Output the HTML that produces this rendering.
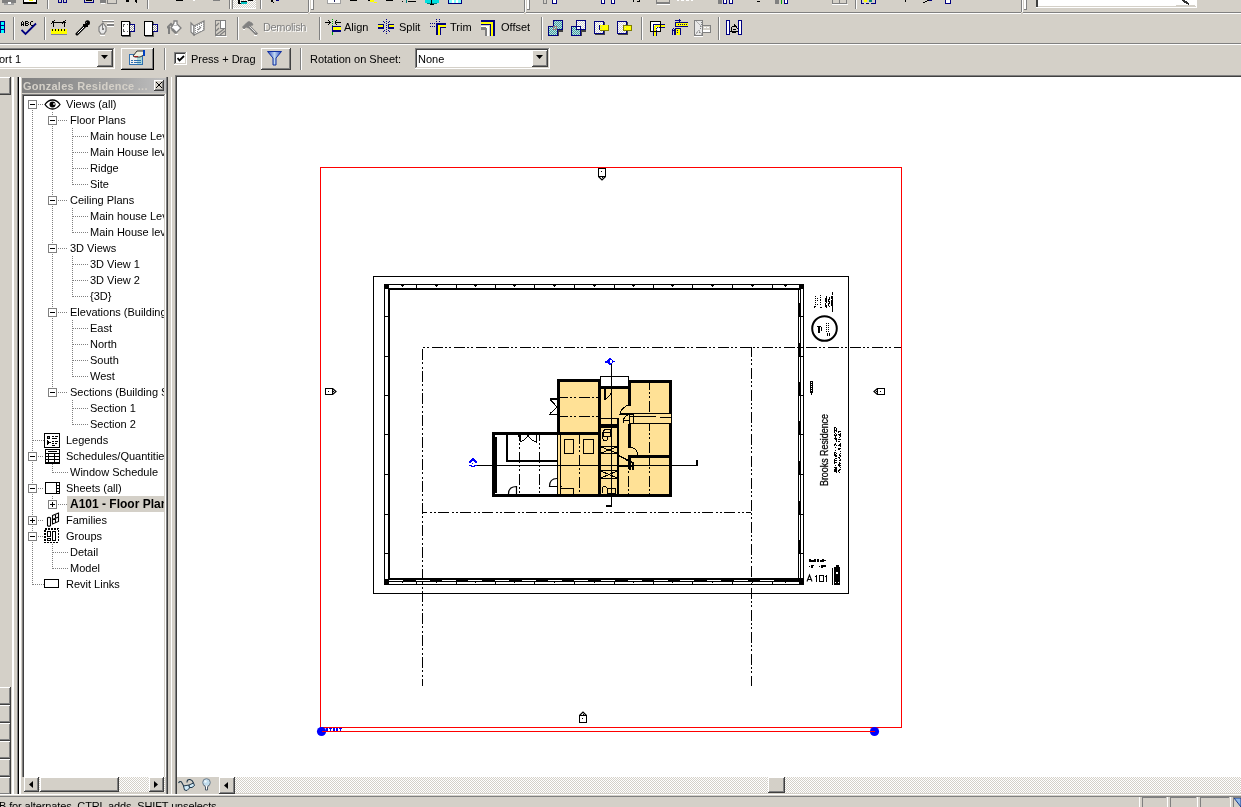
<!DOCTYPE html>
<html><head><meta charset="utf-8">
<style>
*{box-sizing:border-box}
html,body{margin:0;padding:0}
body{width:1241px;height:807px;overflow:hidden;background:#d4d0c8;position:relative;font-family:"Liberation Sans",sans-serif;font-size:11px;color:#000}
.a{position:absolute;display:block}
.t{position:absolute;white-space:nowrap;line-height:13px;font-size:11px;will-change:transform}
</style></head><body>
<div class="a" style="left:0px;top:12px;width:1241px;height:1px;background:#808080;"></div>
<div class="a" style="left:0px;top:13px;width:1241px;height:1px;background:#fff;"></div>
<div class="a" style="left:308px;top:11px;width:2px;height:3px;background:#d4d0c8;"></div>
<div class="a" style="left:308px;top:0px;width:1px;height:12px;background:#808080;"></div>
<div class="a" style="left:309px;top:0px;width:1px;height:12px;background:#fff;"></div>
<div class="a" style="left:524px;top:11px;width:2px;height:3px;background:#d4d0c8;"></div>
<div class="a" style="left:524px;top:0px;width:1px;height:12px;background:#808080;"></div>
<div class="a" style="left:525px;top:0px;width:1px;height:12px;background:#fff;"></div>
<div class="a" style="left:1021px;top:11px;width:2px;height:3px;background:#d4d0c8;"></div>
<div class="a" style="left:1021px;top:0px;width:1px;height:12px;background:#808080;"></div>
<div class="a" style="left:1022px;top:0px;width:1px;height:12px;background:#fff;"></div>
<div class="a" style="left:311px;top:0px;width:2px;height:9px;background:#fff;"></div><div class="a" style="left:313px;top:0px;width:1px;height:9px;background:#808080;"></div><div class="a" style="left:311px;top:9px;width:3px;height:1px;background:#808080;"></div>
<div class="a" style="left:527px;top:0px;width:2px;height:9px;background:#fff;"></div><div class="a" style="left:529px;top:0px;width:1px;height:9px;background:#808080;"></div><div class="a" style="left:527px;top:9px;width:3px;height:1px;background:#808080;"></div>
<div class="a" style="left:1024px;top:0px;width:2px;height:9px;background:#fff;"></div><div class="a" style="left:1026px;top:0px;width:1px;height:9px;background:#808080;"></div><div class="a" style="left:1024px;top:9px;width:3px;height:1px;background:#808080;"></div>
<div class="a" style="left:47px;top:0px;width:1px;height:9px;background:#808080;"></div><div class="a" style="left:48px;top:0px;width:1px;height:9px;background:#fff;"></div>
<div class="a" style="left:147px;top:0px;width:1px;height:9px;background:#808080;"></div><div class="a" style="left:148px;top:0px;width:1px;height:9px;background:#fff;"></div>
<div class="a" style="left:229px;top:0px;width:1px;height:9px;background:#808080;"></div><div class="a" style="left:230px;top:0px;width:1px;height:9px;background:#fff;"></div>
<div class="a" style="left:260px;top:0px;width:1px;height:9px;background:#808080;"></div><div class="a" style="left:261px;top:0px;width:1px;height:9px;background:#fff;"></div>
<div class="a" style="left:855px;top:0px;width:1px;height:9px;background:#808080;"></div><div class="a" style="left:856px;top:0px;width:1px;height:9px;background:#fff;"></div>
<div class="a" style="left:232px;top:0px;width:24px;height:9px;background:repeating-conic-gradient(#d4d0c8 0 25%,#fff 0 50%) 0 0/2px 2px;"></div><div class="a" style="left:232px;top:8px;width:24px;height:1px;background:#fff;"></div><div class="a" style="left:232px;top:0px;width:1px;height:9px;background:#808080;"></div>
<svg class="a" style="left:0px;top:0px" width="18" height="6" viewBox="0 0 18 6" shape-rendering="crispEdges" ><rect x="2" y="0" width="14" height="3" fill="#808080"/><rect x="4" y="3" width="10" height="2" fill="#a0a0a0"/><rect x="8" y="2" width="3" height="2" fill="#fff"/></svg>
<svg class="a" style="left:22px;top:0px" width="18" height="5" viewBox="0 0 18 5" shape-rendering="crispEdges" ><rect x="1" y="0" width="14" height="4" fill="#000"/><rect x="2" y="0" width="12" height="2" fill="#fff"/><rect x="7" y="0" width="4" height="1" fill="#ffff00"/><rect x="3" y="1" width="2" height="1" fill="#fff"/></svg>
<svg class="a" style="left:57px;top:0px" width="12" height="4" viewBox="0 0 12 4" shape-rendering="crispEdges" ><rect x="1.5" y="-1.5" width="3" height="4" fill="none" stroke="#000080" stroke-width="1"/><rect x="6.5" y="-1.5" width="3" height="4" fill="none" stroke="#000080" stroke-width="1"/></svg>
<svg class="a" style="left:83px;top:0px" width="12" height="4" viewBox="0 0 12 4" shape-rendering="crispEdges" ><rect x="1.5" y="-1.5" width="9" height="4" fill="none" stroke="#000080" stroke-width="1"/><rect x="3" y="0" width="6" height="1" fill="#000"/></svg>
<svg class="a" style="left:100px;top:0px" width="18" height="5" viewBox="0 0 18 5" shape-rendering="crispEdges" ><rect x="0" y="0" width="6" height="3" fill="#808080"/><rect x="7.5" y="-1.5" width="9" height="5" fill="#d4d0c8" stroke="#808080" stroke-width="1"/><rect x="1" y="3" width="4" height="1" fill="#fff"/></svg>
<svg class="a" style="left:125px;top:0px" width="14" height="4" viewBox="0 0 14 4" shape-rendering="crispEdges" ><rect x="1" y="0" width="3" height="2" fill="#000"/><rect x="10" y="0" width="2" height="2" fill="#000"/><rect x="11" y="2" width="1" height="1" fill="#000"/></svg>
<svg class="a" style="left:175px;top:0px" width="30" height="3" viewBox="0 0 30 3" shape-rendering="crispEdges" ><rect x="1" y="0" width="7" height="1" fill="#000"/><rect x="18" y="0" width="2" height="1" fill="#fff"/></svg>
<svg class="a" style="left:212px;top:0px" width="10" height="2" viewBox="0 0 10 2" shape-rendering="crispEdges" ><rect x="1" y="0" width="7" height="1" fill="#808080"/></svg>
<svg class="a" style="left:236px;top:0px" width="18" height="5" viewBox="0 0 18 5" shape-rendering="crispEdges" ><rect x="2" y="0" width="2" height="4" fill="#000"/><rect x="2" y="3" width="3" height="1" fill="#000"/><rect x="5" y="2" width="6" height="2" fill="#00c0c0"/><rect x="5" y="1" width="6" height="1" fill="#000"/><rect x="12" y="0" width="5" height="1" fill="#000"/></svg>
<svg class="a" style="left:270px;top:0px" width="12" height="4" viewBox="0 0 12 4" shape-rendering="crispEdges" ><rect x="1" y="0" width="2" height="2" fill="#000"/><rect x="3" y="2" width="1" height="1" fill="#000"/><rect x="6" y="0" width="3" height="1" fill="#000080"/></svg>
<svg class="a" style="left:326px;top:0px" width="16" height="5" viewBox="0 0 16 5" shape-rendering="crispEdges" ><rect x="1" y="0" width="14" height="4" fill="#a0a0a0"/><rect x="2" y="0" width="12" height="3" fill="#fff"/><rect x="8" y="0" width="1" height="2" fill="#202060"/></svg>
<svg class="a" style="left:349px;top:0px" width="48" height="4" viewBox="0 0 48 4" shape-rendering="crispEdges" ><rect x="1" y="0" width="7" height="1" fill="#000"/><rect x="19" y="0" width="3" height="1" fill="#000"/><rect x="21" y="0" width="4" height="2" fill="#ffff00"/><rect x="25" y="2" width="3" height="1" fill="#ffff00"/><rect x="37" y="0" width="7" height="1" fill="#000"/></svg>
<svg class="a" style="left:401px;top:0px" width="16" height="3" viewBox="0 0 16 3" shape-rendering="crispEdges" ><rect x="1" y="1" width="1" height="1" fill="#000"/><rect x="5" y="0" width="1" height="3" fill="#008080"/><rect x="7" y="1" width="8" height="1" fill="#000"/></svg>
<svg class="a" style="left:424px;top:0px" width="16" height="5" viewBox="0 0 16 5" shape-rendering="crispEdges" ><rect x="1" y="0" width="14" height="3" fill="#00e0e0"/><rect x="3" y="3" width="10" height="1" fill="#008080"/><rect x="6" y="4" width="4" height="1" fill="#000"/><rect x="7" y="0" width="1" height="4" fill="#000"/></svg>
<svg class="a" style="left:447px;top:0px" width="16" height="5" viewBox="0 0 16 5" shape-rendering="crispEdges" ><rect x="1" y="0" width="14" height="4" fill="#000080"/><rect x="2" y="0" width="12" height="3" fill="#80ffff"/><rect x="5" y="0" width="2" height="3" fill="#fff"/><rect x="9" y="0" width="2" height="3" fill="#fff"/></svg>
<svg class="a" style="left:542px;top:0px" width="20" height="5" viewBox="0 0 20 5" shape-rendering="crispEdges" ><rect x="1" y="0" width="4" height="4" fill="#808080"/><rect x="2" y="0" width="2" height="3" fill="#d4d0c8"/><rect x="10" y="0" width="5" height="4" fill="#000080"/><rect x="11" y="0" width="3" height="3" fill="#fff"/></svg>
<svg class="a" style="left:600px;top:0px" width="18" height="5" viewBox="0 0 18 5" shape-rendering="crispEdges" ><rect x="1" y="0" width="4" height="4" fill="#000080"/><rect x="2" y="0" width="2" height="3" fill="#fff"/><rect x="11" y="0" width="4" height="4" fill="#000080"/><rect x="12" y="0" width="2" height="3" fill="#fff"/></svg>
<svg class="a" style="left:632px;top:0px" width="12" height="3" viewBox="0 0 12 3" shape-rendering="crispEdges" ><rect x="1" y="0" width="1" height="2" fill="#000"/><rect x="5" y="1" width="3" height="1" fill="#000"/><rect x="7" y="0" width="1" height="1" fill="#000"/></svg>
<svg class="a" style="left:655px;top:0px" width="16" height="6" viewBox="0 0 16 6" shape-rendering="crispEdges" ><rect x="1" y="0" width="14" height="4" fill="#808080"/><rect x="2" y="0" width="12" height="2" fill="#d4d0c8"/><rect x="2" y="4" width="13" height="1" fill="#fff"/></svg>
<svg class="a" style="left:676px;top:0px" width="26" height="2" viewBox="0 0 26 2" shape-rendering="crispEdges" ><rect x="1" y="0" width="2" height="1" fill="#fff"/><rect x="5" y="0" width="3" height="1" fill="#fff"/><rect x="10" y="0" width="3" height="1" fill="#fff"/><rect x="15" y="0" width="2" height="1" fill="#fff"/></svg>
<svg class="a" style="left:717px;top:0px" width="18" height="5" viewBox="0 0 18 5" shape-rendering="crispEdges" ><rect x="1" y="0" width="4" height="4" fill="#808080"/><rect x="6" y="0" width="4" height="4" fill="#000080"/><rect x="7" y="0" width="2" height="3" fill="#fff"/><rect x="12" y="0" width="4" height="4" fill="#000080"/><rect x="13" y="0" width="2" height="3" fill="#fff"/></svg>
<svg class="a" style="left:756px;top:0px" width="6" height="3" viewBox="0 0 6 3" shape-rendering="crispEdges" ><rect x="1" y="1" width="3" height="1" fill="#000"/></svg>
<svg class="a" style="left:774px;top:0px" width="16" height="5" viewBox="0 0 16 5" shape-rendering="crispEdges" ><rect x="1" y="0" width="4" height="4" fill="#808080"/><rect x="7" y="0" width="1" height="4" fill="#00a000"/><rect x="10" y="0" width="4" height="4" fill="#000080"/><rect x="11" y="0" width="2" height="3" fill="#fff"/></svg>
<svg class="a" style="left:831px;top:0px" width="18" height="5" viewBox="0 0 18 5" shape-rendering="crispEdges" ><rect x="1.5" y="-1.5" width="14" height="5" fill="none" stroke="#808080" stroke-width="1"/><rect x="8" y="0" width="1" height="4" fill="#808080"/><rect x="1" y="4" width="16" height="1" fill="#fff"/></svg>
<svg class="a" style="left:860px;top:0px" width="18" height="5" viewBox="0 0 18 5" shape-rendering="crispEdges" ><rect x="1" y="0" width="15" height="4" fill="#000080"/><rect x="2" y="0" width="13" height="3" fill="#d4d0c8"/><rect x="4" y="0" width="3" height="2" fill="#ffff00"/><rect x="9" y="0" width="3" height="2" fill="#008080"/><rect x="4" y="3" width="2" height="1" fill="#d4d0c8"/><rect x="9" y="3" width="2" height="1" fill="#d4d0c8"/></svg>
<svg class="a" style="left:903px;top:0px" width="6" height="3" viewBox="0 0 6 3" shape-rendering="crispEdges" ><rect x="2" y="0" width="1" height="2" fill="#000"/></svg>
<svg class="a" style="left:922px;top:0px" width="12" height="4" viewBox="0 0 12 4" shape-rendering="crispEdges" ><rect x="1" y="2" width="2" height="1" fill="#000"/><rect x="3" y="1" width="2" height="1" fill="#000"/><rect x="5" y="0" width="2" height="1" fill="#000"/><rect x="7" y="0" width="3" height="1" fill="#000080"/></svg>
<svg class="a" style="left:944px;top:0px" width="8" height="5" viewBox="0 0 8 5" shape-rendering="crispEdges" ><rect x="1" y="0" width="6" height="4" fill="#000080"/><rect x="2" y="0" width="4" height="3" fill="#fff"/></svg>
<div class="a" style="left:1036px;top:0px;width:161px;height:8px;background:#fff;"></div><div class="a" style="left:1036px;top:0px;width:2px;height:7px;background:#404040;"></div><div class="a" style="left:1038px;top:6px;width:159px;height:1px;background:#d4d0c8;"></div><div class="a" style="left:1037px;top:7px;width:160px;height:1px;background:#fff;"></div><div class="a" style="left:1196px;top:0px;width:1px;height:8px;background:#fff;"></div>
<div class="a" style="left:1176px;top:5px;width:19px;height:2px;background:#d4d0c8;"></div>
<svg class="a" style="left:1180px;top:0px" width="14" height="6" viewBox="0 0 14 6" shape-rendering="crispEdges" ><path d="M2 0 L9 4" stroke="#303030" stroke-width="2"/></svg>
<div class="a" style="left:0px;top:43px;width:1241px;height:1px;background:#808080;"></div>
<div class="a" style="left:0px;top:44px;width:1241px;height:1px;background:#fff;"></div>
<div class="a" style="left:13px;top:17px;width:1px;height:23px;background:#808080;"></div><div class="a" style="left:14px;top:17px;width:1px;height:23px;background:#fff;"></div>
<div class="a" style="left:44px;top:17px;width:1px;height:23px;background:#808080;"></div><div class="a" style="left:45px;top:17px;width:1px;height:23px;background:#fff;"></div>
<div class="a" style="left:237px;top:17px;width:1px;height:23px;background:#808080;"></div><div class="a" style="left:238px;top:17px;width:1px;height:23px;background:#fff;"></div>
<div class="a" style="left:319px;top:17px;width:1px;height:23px;background:#808080;"></div><div class="a" style="left:320px;top:17px;width:1px;height:23px;background:#fff;"></div>
<div class="a" style="left:541px;top:17px;width:1px;height:23px;background:#808080;"></div><div class="a" style="left:542px;top:17px;width:1px;height:23px;background:#fff;"></div>
<div class="a" style="left:641px;top:17px;width:1px;height:23px;background:#808080;"></div><div class="a" style="left:642px;top:17px;width:1px;height:23px;background:#fff;"></div>
<div class="a" style="left:718px;top:17px;width:1px;height:23px;background:#808080;"></div><div class="a" style="left:719px;top:17px;width:1px;height:23px;background:#fff;"></div>
<svg class="a" style="left:0px;top:14px" width="6" height="20" viewBox="0 0 6 20" shape-rendering="crispEdges" ><rect x="0" y="7" width="5" height="12" fill="#000080"/><rect x="1" y="8" width="3" height="3" fill="#00ffff"/><rect x="1" y="12" width="3" height="3" fill="#00ffff"/><rect x="1" y="16" width="3" height="3" fill="#00ffff"/></svg>
<svg class="a" style="left:21px;top:20px" width="16" height="16" viewBox="0 0 16 16" shape-rendering="crispEdges" ><rect x="0" y="2" width="1" height="4" fill="#000"/><rect x="2" y="2" width="1" height="4" fill="#000"/><rect x="1" y="1" width="1" height="1" fill="#000"/><rect x="0" y="4" width="3" height="1" fill="#000"/><rect x="4" y="1" width="1" height="5" fill="#000"/><rect x="5" y="1" width="2" height="1" fill="#000"/><rect x="5" y="3" width="2" height="1" fill="#000"/><rect x="5" y="5" width="2" height="1" fill="#000"/><rect x="7" y="2" width="1" height="1" fill="#000"/><rect x="7" y="4" width="1" height="1" fill="#000"/><rect x="9" y="2" width="1" height="3" fill="#000"/><rect x="10" y="1" width="2" height="1" fill="#000"/><rect x="10" y="5" width="2" height="1" fill="#000"/><path d="M0.5 10 L4.5 14 L15 3.5" fill="none" stroke="#000080" stroke-width="1.8" shape-rendering="auto"/></svg>
<svg class="a" style="left:51px;top:20px" width="16" height="16" viewBox="0 0 16 16" shape-rendering="crispEdges" ><rect x="1" y="2" width="14" height="1" fill="#000"/><rect x="2" y="1" width="1" height="6" fill="#000"/><rect x="13" y="1" width="1" height="6" fill="#000"/><rect x="1" y="1" width="1" height="1" fill="#000"/><rect x="3" y="0" width="1" height="1" fill="#000"/><rect x="12" y="1" width="1" height="1" fill="#000"/><rect x="14" y="0" width="1" height="1" fill="#000"/><rect x="0" y="3" width="1" height="1" fill="#000"/><rect x="11" y="3" width="1" height="1" fill="#000"/><rect x="0" y="9" width="16" height="5" fill="#ffff00"/><rect x="0" y="14" width="16" height="1" fill="#8080a0"/><rect x="1" y="9" width="1" height="2" fill="#000"/><rect x="4" y="9" width="1" height="2" fill="#000"/><rect x="7" y="9" width="1" height="2" fill="#000"/><rect x="10" y="9" width="1" height="2" fill="#000"/><rect x="13" y="9" width="1" height="2" fill="#000"/></svg>
<svg class="a" style="left:75px;top:20px" width="16" height="16" viewBox="0 0 16 16" shape-rendering="crispEdges" ><path d="M2 14 L10 6" stroke="#000" stroke-width="3" stroke-linecap="round" shape-rendering="auto"/><path d="M2.5 13.5 L9.5 6.5" stroke="#fff" stroke-width="1" shape-rendering="auto"/><circle cx="12.5" cy="2.8" r="2.5" fill="#000" shape-rendering="auto"/><rect x="8" y="4" width="5" height="3" fill="#000"/><rect x="11" y="2" width="1" height="1" fill="#808080"/></svg>
<svg class="a" style="left:98px;top:20px" width="16" height="17" viewBox="0 0 16 17" shape-rendering="crispEdges" ><path d="M5 3 L8 7 L8 11 L6 14 L3 14 L1 11 L1 7 Z" fill="#e8e8e8" stroke="#808080" stroke-width="1.2" shape-rendering="auto"/><rect x="4" y="8" width="2" height="2" fill="#808080"/><rect x="4" y="3" width="1" height="5" fill="#808080"/><rect x="2" y="15" width="5" height="1" fill="#fff"/><rect x="5" y="0" width="11" height="1" fill="#fff"/><rect x="4" y="1" width="12" height="1" fill="#808080"/><rect x="9" y="3" width="7" height="1" fill="#fff"/><rect x="9" y="4" width="7" height="2" fill="#808080"/><rect x="9" y="6" width="7" height="1" fill="#fff"/></svg>
<svg class="a" style="left:121px;top:21px" width="16" height="17" viewBox="0 0 16 17" shape-rendering="crispEdges" ><rect x="1" y="1" width="9" height="15" fill="#606060"/><rect x="0" y="0" width="9" height="15" fill="#000"/><rect x="1" y="1" width="7" height="13" fill="#fff"/><rect x="9" y="3" width="5" height="8" fill="#000080"/><rect x="9" y="4" width="4" height="6" fill="#fff"/><rect x="9" y="4" width="1" height="1" fill="#a0a0a0"/><rect x="11" y="4" width="1" height="1" fill="#a0a0a0"/><rect x="10" y="5" width="1" height="1" fill="#a0a0a0"/><rect x="12" y="5" width="1" height="1" fill="#a0a0a0"/><rect x="9" y="6" width="1" height="1" fill="#a0a0a0"/><rect x="11" y="6" width="1" height="1" fill="#a0a0a0"/><rect x="10" y="7" width="1" height="1" fill="#a0a0a0"/><rect x="12" y="7" width="1" height="1" fill="#a0a0a0"/><rect x="9" y="8" width="1" height="1" fill="#a0a0a0"/><rect x="11" y="8" width="1" height="1" fill="#a0a0a0"/><rect x="10" y="9" width="1" height="1" fill="#a0a0a0"/><rect x="12" y="9" width="1" height="1" fill="#a0a0a0"/><rect x="2" y="3" width="1" height="3" fill="#606060"/><rect x="2" y="8" width="1" height="3" fill="#606060"/><rect x="3" y="3" width="1" height="1" fill="#606060"/><rect x="3" y="10" width="1" height="1" fill="#606060"/><rect x="6" y="3" width="1" height="1" fill="#606060"/><rect x="6" y="10" width="1" height="1" fill="#606060"/></svg>
<svg class="a" style="left:144px;top:21px" width="16" height="17" viewBox="0 0 16 17" shape-rendering="crispEdges" ><rect x="1" y="1" width="9" height="15" fill="#606060"/><rect x="0" y="0" width="9" height="15" fill="#000"/><rect x="1" y="1" width="7" height="13" fill="#fff"/><rect x="9" y="3" width="5" height="8" fill="#000080"/><rect x="9" y="4" width="4" height="6" fill="#fff"/><rect x="9" y="4" width="1" height="1" fill="#a0a0a0"/><rect x="11" y="4" width="1" height="1" fill="#a0a0a0"/><rect x="10" y="5" width="1" height="1" fill="#a0a0a0"/><rect x="12" y="5" width="1" height="1" fill="#a0a0a0"/><rect x="9" y="6" width="1" height="1" fill="#a0a0a0"/><rect x="11" y="6" width="1" height="1" fill="#a0a0a0"/><rect x="10" y="7" width="1" height="1" fill="#a0a0a0"/><rect x="12" y="7" width="1" height="1" fill="#a0a0a0"/><rect x="9" y="8" width="1" height="1" fill="#a0a0a0"/><rect x="11" y="8" width="1" height="1" fill="#a0a0a0"/><rect x="10" y="9" width="1" height="1" fill="#a0a0a0"/><rect x="12" y="9" width="1" height="1" fill="#a0a0a0"/></svg>
<svg class="a" style="left:167px;top:20px" width="16" height="16" viewBox="0 0 16 16" shape-rendering="crispEdges" ><path d="M7 3 L7 1 L10 1 L10 4 L14 8 L9 13 L4 8 Z" fill="#fff" stroke="#808080" stroke-width="1.3" shape-rendering="auto"/><path d="M5 9 L9 13" stroke="#808080" stroke-width="2.5" shape-rendering="auto"/><rect x="1" y="7" width="2" height="7" fill="#808080"/><path d="M0 8 L4 4 L6 6" fill="none" stroke="#808080" stroke-width="2" shape-rendering="auto"/><rect x="6" y="5" width="4" height="1" fill="#c0c0c0"/><rect x="8" y="14" width="3" height="1" fill="#fff"/></svg>
<svg class="a" style="left:190px;top:20px" width="16" height="16" viewBox="0 0 16 16" shape-rendering="crispEdges" ><path d="M1 3 L4 6 L4 15 L1 12 Z" fill="#fff" stroke="#808080" stroke-width="1.2" shape-rendering="auto"/><path d="M4 6 L14 1 L14 10 L4 15 Z" fill="#fff" stroke="#808080" stroke-width="1.2" shape-rendering="auto"/><rect x="5" y="6" width="1" height="1" fill="#909090"/><rect x="7" y="5" width="1" height="1" fill="#909090"/><rect x="9" y="4" width="1" height="1" fill="#909090"/><rect x="11" y="3" width="1" height="1" fill="#909090"/><rect x="13" y="2" width="1" height="1" fill="#909090"/><rect x="5" y="8" width="1" height="1" fill="#909090"/><rect x="7" y="7" width="1" height="1" fill="#909090"/><rect x="9" y="6" width="1" height="1" fill="#909090"/><rect x="11" y="5" width="1" height="1" fill="#909090"/><rect x="13" y="4" width="1" height="1" fill="#909090"/><rect x="5" y="10" width="1" height="1" fill="#909090"/><rect x="7" y="9" width="1" height="1" fill="#909090"/><rect x="9" y="8" width="1" height="1" fill="#909090"/><rect x="11" y="7" width="1" height="1" fill="#909090"/><rect x="13" y="6" width="1" height="1" fill="#909090"/><rect x="5" y="12" width="1" height="1" fill="#909090"/><rect x="7" y="11" width="1" height="1" fill="#909090"/><rect x="9" y="10" width="1" height="1" fill="#909090"/><rect x="11" y="9" width="1" height="1" fill="#909090"/><rect x="13" y="8" width="1" height="1" fill="#909090"/><rect x="5" y="14" width="1" height="1" fill="#909090"/><rect x="7" y="13" width="1" height="1" fill="#909090"/><rect x="9" y="12" width="1" height="1" fill="#909090"/><rect x="11" y="11" width="1" height="1" fill="#909090"/><rect x="13" y="10" width="1" height="1" fill="#909090"/><rect x="8" y="7" width="4" height="4" fill="#fff"/><path d="M8 10 L11 7" stroke="#808080" stroke-width="1.2" shape-rendering="auto"/></svg>
<svg class="a" style="left:215px;top:20px" width="12" height="17" viewBox="0 0 12 17" shape-rendering="crispEdges" ><rect x="0" y="0" width="11" height="16" fill="#808080"/><rect x="1" y="1" width="9" height="14" fill="#d4d0c8"/><rect x="5" y="1" width="1" height="8" fill="#808080"/><rect x="5" y="8" width="5" height="1" fill="#808080"/><rect x="6" y="1" width="4" height="7" fill="#fff"/><path d="M1 6 L4 3 M1 11 L4 8 M1 15 L9 9 M5 15 L10 11" stroke="#808080" stroke-width="1.3" shape-rendering="auto"/><rect x="1" y="16" width="11" height="1" fill="#fff"/></svg>
<svg class="a" style="left:242px;top:20px" width="16" height="16" viewBox="0 0 16 16" shape-rendering="crispEdges" ><path d="M0.5 7 L5 2.5 L7 1.5 L10 3 L11 5 L8.5 5.5 L6.5 8 L4 7 L2 9 Z" fill="#808080" stroke="#808080" stroke-width="0.8" shape-rendering="auto"/><path d="M7 6.5 L14 13.5" stroke="#808080" stroke-width="3" stroke-linecap="square" shape-rendering="auto"/><path d="M7.5 6.5 L13.5 12.5" stroke="#fff" stroke-width="0.8" shape-rendering="auto"/><rect x="1" y="9" width="2" height="1" fill="#fff"/><rect x="12" y="15" width="3" height="1" fill="#fff"/></svg>
<div class="t" style="left:263px;top:21px;color:#808080;text-shadow:1px 1px 0 #fff;letter-spacing:-0.35px">Demolish</div>
<svg class="a" style="left:325px;top:19px" width="16" height="16" viewBox="0 0 16 16" shape-rendering="crispEdges" ><rect x="0" y="3" width="6" height="1" fill="#000"/><rect x="4" y="2" width="1" height="3" fill="#000"/><rect x="10" y="2" width="1" height="3" fill="#000"/><rect x="10" y="3" width="6" height="1" fill="#000"/><rect x="3" y="1" width="1" height="1" fill="#000"/><rect x="3" y="5" width="1" height="1" fill="#000"/><rect x="11" y="1" width="1" height="1" fill="#000"/><rect x="11" y="5" width="1" height="1" fill="#000"/><rect x="7" y="0" width="1" height="1" fill="#00a000"/><rect x="7" y="2" width="1" height="1" fill="#00a000"/><rect x="7" y="4" width="1" height="1" fill="#00a000"/><rect x="7" y="6" width="1" height="1" fill="#00a000"/><rect x="7" y="8" width="1" height="1" fill="#00a000"/><rect x="7" y="10" width="1" height="1" fill="#00a000"/><rect x="7" y="12" width="1" height="1" fill="#00a000"/><rect x="7" y="14" width="1" height="1" fill="#00a000"/><rect x="7" y="7" width="9" height="6" fill="#000080"/><rect x="8" y="8" width="8" height="3" fill="#ffff00"/><rect x="7" y="13" width="1" height="3" fill="#00a000"/></svg>
<div class="t" style="left:344px;top:21px;">Align</div>
<svg class="a" style="left:378px;top:19px" width="16" height="16" viewBox="0 0 16 16" shape-rendering="crispEdges" ><rect x="0" y="5" width="6" height="5" fill="#000080"/><rect x="0" y="6" width="5" height="2" fill="#ffff00"/><rect x="10" y="5" width="6" height="5" fill="#000080"/><rect x="11" y="6" width="5" height="2" fill="#ffff00"/><rect x="8" y="0" width="1" height="1" fill="#000080"/><rect x="8" y="2" width="1" height="1" fill="#000080"/><rect x="8" y="4" width="1" height="1" fill="#000080"/><rect x="8" y="6" width="1" height="1" fill="#000080"/><rect x="8" y="8" width="1" height="1" fill="#000080"/><rect x="8" y="10" width="1" height="1" fill="#000080"/><rect x="8" y="12" width="1" height="1" fill="#000080"/><rect x="8" y="14" width="1" height="1" fill="#000080"/><rect x="5" y="2" width="1" height="1" fill="#000080"/><rect x="6" y="3" width="1" height="1" fill="#000080"/><rect x="10" y="3" width="1" height="1" fill="#000080"/><rect x="11" y="2" width="1" height="1" fill="#000080"/><rect x="5" y="12" width="1" height="1" fill="#000080"/><rect x="6" y="11" width="1" height="1" fill="#000080"/><rect x="10" y="11" width="1" height="1" fill="#000080"/><rect x="11" y="12" width="1" height="1" fill="#000080"/></svg>
<div class="t" style="left:399px;top:21px;">Split</div>
<svg class="a" style="left:430px;top:19px" width="16" height="16" viewBox="0 0 16 16" shape-rendering="crispEdges" ><rect x="0" y="4" width="1" height="1" fill="#000080"/><rect x="0" y="7" width="1" height="1" fill="#000080"/><rect x="2" y="4" width="1" height="1" fill="#000080"/><rect x="2" y="7" width="1" height="1" fill="#000080"/><rect x="4" y="4" width="1" height="1" fill="#000080"/><rect x="4" y="7" width="1" height="1" fill="#000080"/><rect x="6" y="0" width="1" height="1" fill="#000080"/><rect x="9" y="0" width="1" height="1" fill="#000080"/><rect x="6" y="2" width="1" height="1" fill="#000080"/><rect x="9" y="2" width="1" height="1" fill="#000080"/><rect x="6" y="4" width="10" height="2" fill="#000080"/><rect x="6" y="4" width="2" height="12" fill="#000080"/><rect x="8" y="6" width="8" height="2" fill="#ffff00"/><rect x="8" y="6" width="2" height="10" fill="#ffff00"/><rect x="10" y="8" width="6" height="1" fill="#000080"/><rect x="10" y="8" width="1" height="8" fill="#000080"/></svg>
<div class="t" style="left:450px;top:21px;">Trim</div>
<svg class="a" style="left:481px;top:20px" width="16" height="16" viewBox="0 0 16 16" shape-rendering="crispEdges" ><rect x="0" y="0" width="14" height="2" fill="#000080"/><rect x="12" y="0" width="2" height="16" fill="#000080"/><rect x="0" y="2" width="12" height="2" fill="#ffff00"/><rect x="10" y="2" width="2" height="14" fill="#ffff00"/><rect x="0" y="4" width="10" height="1" fill="#000080"/><rect x="9" y="4" width="1" height="12" fill="#000080"/><rect x="0" y="6" width="8" height="2" fill="#fff"/><rect x="6" y="6" width="2" height="10" fill="#fff"/><rect x="0" y="8" width="6" height="2" fill="#808080"/><rect x="4" y="8" width="2" height="8" fill="#808080"/><rect x="0" y="7" width="5" height="1" fill="#808080"/></svg>
<div class="t" style="left:501px;top:21px;">Offset</div>
<svg class="a" style="left:548px;top:20px" width="17" height="17" viewBox="0 0 17 17" shape-rendering="crispEdges" ><defs><pattern id="pt" width="2" height="2" patternUnits="userSpaceOnUse"><rect width="2" height="2" fill="#40a0a0"/><rect width="1" height="1" fill="#c0e0e0"/><rect x="1" y="1" width="1" height="1" fill="#c0e0e0"/></pattern><pattern id="pw" width="2" height="2" patternUnits="userSpaceOnUse"><rect width="2" height="2" fill="#fff"/><rect width="1" height="1" fill="#d0d0d0"/><rect x="1" y="1" width="1" height="1" fill="#d0d0d0"/></pattern><pattern id="py" width="2" height="2" patternUnits="userSpaceOnUse"><rect width="2" height="2" fill="#ffff00"/><rect width="1" height="1" fill="#e0e0a0"/></pattern></defs><rect x="1" y="9" width="10" height="7" fill="#404040"/><rect x="5" y="1" width="10" height="11" fill="#404040"/><rect x="0" y="6" width="10" height="10" fill="#000080"/><rect x="1" y="7" width="8" height="8" fill="url(#pt)"/><rect x="5" y="0" width="10" height="10" fill="#000080"/><rect x="6" y="1" width="8" height="8" fill="url(#pt)"/><rect x="5.5" y="6.5" width="3" height="3" fill="none" stroke="#a08080" stroke-width="1"/></svg>
<svg class="a" style="left:571px;top:20px" width="17" height="17" viewBox="0 0 17 17" shape-rendering="crispEdges" ><defs><pattern id="pt" width="2" height="2" patternUnits="userSpaceOnUse"><rect width="2" height="2" fill="#40a0a0"/><rect width="1" height="1" fill="#c0e0e0"/><rect x="1" y="1" width="1" height="1" fill="#c0e0e0"/></pattern><pattern id="pw" width="2" height="2" patternUnits="userSpaceOnUse"><rect width="2" height="2" fill="#fff"/><rect width="1" height="1" fill="#d0d0d0"/><rect x="1" y="1" width="1" height="1" fill="#d0d0d0"/></pattern><pattern id="py" width="2" height="2" patternUnits="userSpaceOnUse"><rect width="2" height="2" fill="#ffff00"/><rect width="1" height="1" fill="#e0e0a0"/></pattern></defs><rect x="1" y="9" width="10" height="7" fill="#404040"/><rect x="5" y="1" width="10" height="11" fill="#404040"/><rect x="5" y="0" width="10" height="10" fill="#000080"/><rect x="6" y="1" width="8" height="8" fill="url(#pw)"/><rect x="0" y="6" width="10" height="10" fill="#000080"/><rect x="1" y="7" width="8" height="8" fill="url(#pt)"/><rect x="5" y="6" width="4" height="4" fill="#000080"/><rect x="6" y="7" width="3" height="2" fill="#fff"/></svg>
<svg class="a" style="left:594px;top:20px" width="17" height="17" viewBox="0 0 17 17" shape-rendering="crispEdges" ><defs><pattern id="pt" width="2" height="2" patternUnits="userSpaceOnUse"><rect width="2" height="2" fill="#40a0a0"/><rect width="1" height="1" fill="#c0e0e0"/><rect x="1" y="1" width="1" height="1" fill="#c0e0e0"/></pattern><pattern id="pw" width="2" height="2" patternUnits="userSpaceOnUse"><rect width="2" height="2" fill="#fff"/><rect width="1" height="1" fill="#d0d0d0"/><rect x="1" y="1" width="1" height="1" fill="#d0d0d0"/></pattern><pattern id="py" width="2" height="2" patternUnits="userSpaceOnUse"><rect width="2" height="2" fill="#ffff00"/><rect width="1" height="1" fill="#e0e0a0"/></pattern></defs><rect x="1" y="2" width="10" height="13" fill="#404040"/><rect x="0" y="1" width="10" height="13" fill="#000080"/><rect x="1" y="2" width="8" height="11" fill="url(#pw)"/><rect x="6" y="5" width="9" height="6" fill="#808000"/><rect x="6" y="5" width="8" height="5" fill="#ffff00"/><rect x="5" y="5" width="1" height="5" fill="#000080"/><rect x="7" y="6" width="1" height="1" fill="#c0c0c0"/><rect x="7" y="8" width="1" height="1" fill="#c0c0c0"/></svg>
<svg class="a" style="left:617px;top:20px" width="17" height="17" viewBox="0 0 17 17" shape-rendering="crispEdges" ><defs><pattern id="pt" width="2" height="2" patternUnits="userSpaceOnUse"><rect width="2" height="2" fill="#40a0a0"/><rect width="1" height="1" fill="#c0e0e0"/><rect x="1" y="1" width="1" height="1" fill="#c0e0e0"/></pattern><pattern id="pw" width="2" height="2" patternUnits="userSpaceOnUse"><rect width="2" height="2" fill="#fff"/><rect width="1" height="1" fill="#d0d0d0"/><rect x="1" y="1" width="1" height="1" fill="#d0d0d0"/></pattern><pattern id="py" width="2" height="2" patternUnits="userSpaceOnUse"><rect width="2" height="2" fill="#ffff00"/><rect width="1" height="1" fill="#e0e0a0"/></pattern></defs><rect x="1" y="2" width="10" height="13" fill="#404040"/><rect x="0" y="1" width="10" height="13" fill="#000080"/><rect x="1" y="2" width="8" height="11" fill="url(#pw)"/><rect x="6" y="5" width="9" height="6" fill="#808000"/><rect x="7" y="6" width="7" height="4" fill="#ffff00"/><rect x="7" y="6" width="2" height="4" fill="url(#py)"/></svg>
<svg class="a" style="left:650px;top:21px" width="16" height="16" viewBox="0 0 16 16" shape-rendering="crispEdges" ><rect x="0" y="0" width="11" height="11" fill="#000"/><rect x="1" y="1" width="9" height="9" fill="#fff"/><rect x="3" y="3" width="12" height="4" fill="#000080"/><rect x="3" y="3" width="4" height="12" fill="#000080"/><rect x="4" y="4" width="11" height="2" fill="#ffff00"/><rect x="4" y="4" width="2" height="11" fill="#ffff00"/><rect x="7" y="7" width="3" height="3" fill="#fff"/><rect x="6" y="6" width="1" height="1" fill="#fff"/><rect x="4" y="4" width="1" height="1" fill="#fff"/><rect x="6" y="8" width="1" height="1" fill="#d0d0a0"/><rect x="8" y="6" width="1" height="1" fill="#d0d0a0"/><rect x="10" y="3" width="1" height="4" fill="#000"/><rect x="3" y="10" width="4" height="1" fill="#000"/></svg>
<svg class="a" style="left:672px;top:19px" width="17" height="17" viewBox="0 0 17 17" shape-rendering="crispEdges" ><rect x="3" y="1" width="6" height="1" fill="#000080"/><rect x="7" y="0" width="1" height="3" fill="#000080"/><rect x="8" y="1" width="1" height="1" fill="#000080"/><rect x="3" y="3" width="13" height="5" fill="#000080"/><rect x="4" y="4" width="12" height="3" fill="#ffff00"/><rect x="6" y="5" width="1" height="1" fill="#000080"/><rect x="8" y="5" width="1" height="1" fill="#000080"/><rect x="10" y="5" width="1" height="1" fill="#000080"/><rect x="12" y="5" width="1" height="1" fill="#000080"/><rect x="14" y="5" width="1" height="1" fill="#000080"/><rect x="0" y="10" width="1" height="6" fill="#000080"/><rect x="-1" y="11" width="3" height="1" fill="#000080"/><rect x="2" y="10" width="1" height="6" fill="#000080"/><rect x="1" y="9" width="1" height="1" fill="#000080"/><rect x="3" y="9" width="6" height="7" fill="#000080"/><rect x="4" y="10" width="4" height="6" fill="#ffff00"/><rect x="5" y="11" width="1" height="1" fill="#000080"/><rect x="5" y="13" width="1" height="1" fill="#000080"/></svg>
<svg class="a" style="left:694px;top:20px" width="17" height="17" viewBox="0 0 17 17" shape-rendering="crispEdges" ><rect x="0" y="0" width="9" height="16" fill="#808080"/><rect x="1" y="1" width="7" height="14" fill="#e8e8e8"/><rect x="2" y="1" width="1" height="1" fill="#b0b0b0"/><rect x="7" y="2" width="1" height="1" fill="#808080"/><rect x="3" y="2" width="1" height="1" fill="#b0b0b0"/><rect x="7" y="4" width="1" height="1" fill="#808080"/><rect x="4" y="3" width="1" height="1" fill="#b0b0b0"/><rect x="6" y="6" width="1" height="1" fill="#808080"/><rect x="5" y="4" width="1" height="1" fill="#b0b0b0"/><rect x="6" y="8" width="1" height="1" fill="#808080"/><rect x="6" y="5" width="1" height="1" fill="#b0b0b0"/><rect x="5" y="10" width="1" height="1" fill="#808080"/><rect x="7" y="6" width="1" height="1" fill="#b0b0b0"/><rect x="5" y="12" width="1" height="1" fill="#808080"/><path d="M1 15 L5 10 L8 15" fill="none" stroke="#b0b0b0" stroke-width="1"/><rect x="8" y="5" width="9" height="8" fill="#808080"/><rect x="9" y="6" width="7" height="6" fill="#d4d0c8"/><rect x="10" y="7" width="2" height="1" fill="#fff"/><rect x="13" y="7" width="2" height="1" fill="#fff"/><rect x="9" y="10" width="7" height="2" fill="#fff"/><rect x="0" y="16" width="9" height="1" fill="#fff"/></svg>
<svg class="a" style="left:726px;top:20px" width="16" height="16" viewBox="0 0 16 16" shape-rendering="crispEdges" ><rect x="0" y="0" width="4" height="15" fill="#000080"/><rect x="1" y="1" width="2" height="13" fill="#fff"/><rect x="12" y="0" width="4" height="15" fill="#000080"/><rect x="13" y="1" width="2" height="13" fill="#fff"/><rect x="4" y="11" width="8" height="1" fill="#000"/><rect x="6" y="6" width="5" height="1" fill="#000"/><rect x="5" y="7" width="1" height="4" fill="#000"/><rect x="10" y="7" width="1" height="1" fill="#000"/><rect x="11" y="8" width="1" height="1" fill="#000"/><rect x="7" y="9" width="3" height="1" fill="#000"/><rect x="6" y="12" width="4" height="1" fill="#000"/><rect x="8" y="4" width="1" height="2" fill="#000"/><rect x="9" y="5" width="1" height="1" fill="#000"/></svg>
<div class="a" style="left:0px;top:48px;width:115px;height:21px;background:#fff;"></div><div class="a" style="left:0px;top:48px;width:115px;height:1px;background:#808080;"></div><div class="a" style="left:0px;top:49px;width:114px;height:1px;background:#404040;"></div><div class="a" style="left:0px;top:68px;width:115px;height:1px;background:#fff;"></div><div class="a" style="left:0px;top:67px;width:114px;height:1px;background:#d4d0c8;"></div><div class="a" style="left:114px;top:48px;width:1px;height:21px;background:#fff;"></div><div class="a" style="left:113px;top:49px;width:1px;height:19px;background:#d4d0c8;"></div>
<div class="a" style="left:97px;top:50px;width:16px;height:17px;background:#d4d0c8;"></div><div class="a" style="left:97px;top:50px;width:16px;height:1px;background:#fff;"></div><div class="a" style="left:97px;top:50px;width:1px;height:17px;background:#fff;"></div><div class="a" style="left:97px;top:66px;width:16px;height:1px;background:#404040;"></div><div class="a" style="left:112px;top:50px;width:1px;height:17px;background:#404040;"></div><div class="a" style="left:98px;top:65px;width:14px;height:1px;background:#808080;"></div><div class="a" style="left:111px;top:51px;width:1px;height:15px;background:#808080;"></div>
<svg class="a" style="left:101px;top:55px" width="8" height="5" viewBox="0 0 8 5" shape-rendering="crispEdges" ><path d="M0 0 H7 L3.5 4 Z" fill="#000" shape-rendering="auto"/></svg>
<div class="t" style="left:-1px;top:53px;">ort 1</div>
<div class="a" style="left:121px;top:48px;width:33px;height:22px;background:#d4d0c8;"></div><div class="a" style="left:121px;top:48px;width:32px;height:1px;background:#fff;"></div><div class="a" style="left:121px;top:48px;width:1px;height:21px;background:#fff;"></div><div class="a" style="left:121px;top:69px;width:33px;height:1px;background:#000;"></div><div class="a" style="left:153px;top:48px;width:1px;height:22px;background:#000;"></div><div class="a" style="left:122px;top:68px;width:31px;height:1px;background:#808080;"></div><div class="a" style="left:152px;top:49px;width:1px;height:20px;background:#808080;"></div>
<svg class="a" style="left:129px;top:50px" width="17" height="16" viewBox="0 0 17 16" shape-rendering="crispEdges" ><rect x="0" y="4" width="14" height="11" fill="#3070b0"/><rect x="1" y="5" width="12" height="9" fill="#f0f0f0"/><rect x="8" y="5" width="5" height="9" fill="#a8d8d8"/><rect x="2" y="10" width="2" height="1" fill="#3070b0"/><rect x="5" y="10" width="7" height="1" fill="#3070b0"/><rect x="2" y="12" width="2" height="1" fill="#3070b0"/><rect x="5" y="12" width="7" height="1" fill="#3070b0"/><path d="M4 6 L8 1 L15 1 L15 5 L11 7 L6 7 Z" fill="#f0f0e0" stroke="#303030" stroke-width="1" shape-rendering="auto"/><rect x="14" y="0" width="2" height="6" fill="#0040c0"/><rect x="5" y="6" width="4" height="1" fill="#a02020"/></svg>
<div class="a" style="left:164px;top:48px;width:1px;height:22px;background:#808080;"></div><div class="a" style="left:165px;top:48px;width:1px;height:22px;background:#fff;"></div>
<div class="a" style="left:174px;top:52px;width:13px;height:13px;background:#fff;"></div><div class="a" style="left:174px;top:52px;width:12px;height:1px;background:#808080;"></div><div class="a" style="left:174px;top:52px;width:1px;height:12px;background:#808080;"></div><div class="a" style="left:175px;top:53px;width:10px;height:1px;background:#404040;"></div><div class="a" style="left:175px;top:53px;width:1px;height:10px;background:#404040;"></div><div class="a" style="left:175px;top:63px;width:11px;height:1px;background:#d4d0c8;"></div><div class="a" style="left:185px;top:53px;width:1px;height:11px;background:#d4d0c8;"></div>
<svg class="a" style="left:177px;top:55px" width="8" height="8" viewBox="0 0 8 8" shape-rendering="crispEdges" ><path d="M0.5 3 L2.5 5.5 L7 1" fill="none" stroke="#000" stroke-width="1.8" shape-rendering="auto"/></svg>
<div class="t" style="left:191px;top:53px;">Press + Drag</div>
<div class="a" style="left:261px;top:48px;width:30px;height:22px;background:#d4d0c8;"></div><div class="a" style="left:261px;top:48px;width:29px;height:1px;background:#fff;"></div><div class="a" style="left:261px;top:48px;width:1px;height:21px;background:#fff;"></div><div class="a" style="left:261px;top:69px;width:30px;height:1px;background:#404040;"></div><div class="a" style="left:290px;top:48px;width:1px;height:22px;background:#404040;"></div><div class="a" style="left:262px;top:68px;width:28px;height:1px;background:#808080;"></div><div class="a" style="left:289px;top:49px;width:1px;height:20px;background:#808080;"></div>
<svg class="a" style="left:267px;top:51px" width="16" height="15" viewBox="0 0 16 15" shape-rendering="crispEdges" ><defs><linearGradient id="fg" x1="0" x2="1"><stop offset="0" stop-color="#2040c0"/><stop offset="0.5" stop-color="#c0d8f0"/><stop offset="1" stop-color="#2040c0"/></linearGradient></defs><path d="M0.5 0.5 H14.5 L9 7 V14 H6 V7 Z" fill="url(#fg)" stroke="#1030a0" stroke-width="1" shape-rendering="auto"/></svg>
<div class="a" style="left:300px;top:48px;width:1px;height:22px;background:#808080;"></div><div class="a" style="left:301px;top:48px;width:1px;height:22px;background:#fff;"></div>
<div class="t" style="left:310px;top:53px;">Rotation on Sheet:</div>
<div class="a" style="left:415px;top:48px;width:135px;height:21px;background:#fff;"></div><div class="a" style="left:415px;top:48px;width:134px;height:1px;background:#808080;"></div><div class="a" style="left:415px;top:48px;width:1px;height:20px;background:#808080;"></div><div class="a" style="left:416px;top:49px;width:132px;height:1px;background:#404040;"></div><div class="a" style="left:416px;top:49px;width:1px;height:18px;background:#404040;"></div><div class="a" style="left:415px;top:68px;width:135px;height:1px;background:#fff;"></div><div class="a" style="left:549px;top:48px;width:1px;height:21px;background:#fff;"></div><div class="a" style="left:416px;top:67px;width:133px;height:1px;background:#d4d0c8;"></div><div class="a" style="left:548px;top:49px;width:1px;height:19px;background:#d4d0c8;"></div>
<div class="a" style="left:532px;top:50px;width:16px;height:17px;background:#d4d0c8;"></div><div class="a" style="left:532px;top:50px;width:16px;height:1px;background:#fff;"></div><div class="a" style="left:532px;top:50px;width:1px;height:17px;background:#fff;"></div><div class="a" style="left:532px;top:66px;width:16px;height:1px;background:#404040;"></div><div class="a" style="left:547px;top:50px;width:1px;height:17px;background:#404040;"></div><div class="a" style="left:533px;top:65px;width:14px;height:1px;background:#808080;"></div><div class="a" style="left:546px;top:51px;width:1px;height:15px;background:#808080;"></div>
<svg class="a" style="left:536px;top:55px" width="8" height="5" viewBox="0 0 8 5" shape-rendering="crispEdges" ><path d="M0 0 H7 L3.5 4 Z" fill="#000" shape-rendering="auto"/></svg>
<div class="t" style="left:418px;top:53px;">None</div>
<div class="a" style="left:0px;top:77px;width:11px;height:18px;background:#d4d0c8;"></div><div class="a" style="left:0px;top:77px;width:10px;height:1px;background:#fff;"></div><div class="a" style="left:0px;top:94px;width:11px;height:1px;background:#404040;"></div><div class="a" style="left:10px;top:77px;width:1px;height:18px;background:#404040;"></div><div class="a" style="left:0px;top:93px;width:10px;height:1px;background:#808080;"></div><div class="a" style="left:9px;top:78px;width:1px;height:15px;background:#808080;"></div>
<div class="a" style="left:0px;top:687px;width:11px;height:18px;background:#d4d0c8;"></div><div class="a" style="left:0px;top:687px;width:10px;height:1px;background:#fff;"></div><div class="a" style="left:0px;top:704px;width:11px;height:1px;background:#404040;"></div><div class="a" style="left:10px;top:687px;width:1px;height:18px;background:#404040;"></div><div class="a" style="left:0px;top:703px;width:10px;height:1px;background:#808080;"></div><div class="a" style="left:9px;top:688px;width:1px;height:16px;background:#808080;"></div>
<div class="a" style="left:0px;top:705px;width:11px;height:18px;background:#d4d0c8;"></div><div class="a" style="left:0px;top:705px;width:10px;height:1px;background:#fff;"></div><div class="a" style="left:0px;top:722px;width:11px;height:1px;background:#404040;"></div><div class="a" style="left:10px;top:705px;width:1px;height:18px;background:#404040;"></div><div class="a" style="left:0px;top:721px;width:10px;height:1px;background:#808080;"></div><div class="a" style="left:9px;top:706px;width:1px;height:16px;background:#808080;"></div>
<div class="a" style="left:0px;top:723px;width:11px;height:18px;background:#d4d0c8;"></div><div class="a" style="left:0px;top:723px;width:10px;height:1px;background:#fff;"></div><div class="a" style="left:0px;top:740px;width:11px;height:1px;background:#404040;"></div><div class="a" style="left:10px;top:723px;width:1px;height:18px;background:#404040;"></div><div class="a" style="left:0px;top:739px;width:10px;height:1px;background:#808080;"></div><div class="a" style="left:9px;top:724px;width:1px;height:16px;background:#808080;"></div>
<div class="a" style="left:0px;top:741px;width:11px;height:18px;background:#d4d0c8;"></div><div class="a" style="left:0px;top:741px;width:10px;height:1px;background:#fff;"></div><div class="a" style="left:0px;top:758px;width:11px;height:1px;background:#404040;"></div><div class="a" style="left:10px;top:741px;width:1px;height:18px;background:#404040;"></div><div class="a" style="left:0px;top:757px;width:10px;height:1px;background:#808080;"></div><div class="a" style="left:9px;top:742px;width:1px;height:16px;background:#808080;"></div>
<div class="a" style="left:0px;top:759px;width:11px;height:18px;background:#d4d0c8;"></div><div class="a" style="left:0px;top:759px;width:10px;height:1px;background:#fff;"></div><div class="a" style="left:0px;top:776px;width:11px;height:1px;background:#404040;"></div><div class="a" style="left:10px;top:759px;width:1px;height:18px;background:#404040;"></div><div class="a" style="left:0px;top:775px;width:10px;height:1px;background:#808080;"></div><div class="a" style="left:9px;top:760px;width:1px;height:16px;background:#808080;"></div>
<div class="a" style="left:0px;top:777px;width:11px;height:18px;background:#d4d0c8;"></div><div class="a" style="left:0px;top:777px;width:10px;height:1px;background:#fff;"></div><div class="a" style="left:0px;top:794px;width:11px;height:1px;background:#404040;"></div><div class="a" style="left:10px;top:777px;width:1px;height:18px;background:#404040;"></div><div class="a" style="left:0px;top:793px;width:10px;height:1px;background:#808080;"></div><div class="a" style="left:9px;top:778px;width:1px;height:16px;background:#808080;"></div>
<div class="a" style="left:12px;top:77px;width:2px;height:718px;background:#fff;"></div>
<div class="a" style="left:18px;top:77px;width:1px;height:718px;background:#000;"></div>
<div class="a" style="left:17px;top:77px;width:1px;height:718px;background:#808080;"></div>
<div class="a" style="left:19px;top:77px;width:2px;height:718px;background:#fff;"></div>
<div class="a" style="left:167px;top:77px;width:1px;height:718px;background:#404040;"></div>
<div class="a" style="left:166px;top:77px;width:1px;height:718px;background:#808080;"></div>
<div class="a" style="left:171px;top:77px;width:1px;height:718px;background:#fff;"></div>
<div class="a" style="left:22px;top:78px;width:144px;height:15px;background:linear-gradient(90deg,#808080 0%,#a0a0a0 60%,#c0c0c0 100%);"></div>
<div class="t" style="left:23px;top:80px;font-weight:bold;color:#d4d0c8;letter-spacing:0.25px">Gonzales Residence ...</div>
<div class="a" style="left:154px;top:80px;width:10px;height:11px;background:#d4d0c8;"></div><div class="a" style="left:154px;top:80px;width:9px;height:1px;background:#fff;"></div><div class="a" style="left:154px;top:80px;width:1px;height:10px;background:#fff;"></div><div class="a" style="left:154px;top:90px;width:10px;height:1px;background:#404040;"></div><div class="a" style="left:163px;top:80px;width:1px;height:11px;background:#404040;"></div><div class="a" style="left:155px;top:89px;width:8px;height:1px;background:#808080;"></div><div class="a" style="left:162px;top:81px;width:1px;height:9px;background:#808080;"></div>
<svg class="a" style="left:156px;top:82px" width="6" height="6" viewBox="0 0 6 6" shape-rendering="crispEdges" ><path d="M0 0 L6 6 M6 0 L0 6" stroke="#000" stroke-width="1" shape-rendering="auto"/></svg>
<div class="a" style="left:22px;top:94px;width:144px;height:683px;background:#fff;"></div><div class="a" style="left:22px;top:94px;width:144px;height:1px;background:#808080;"></div><div class="a" style="left:22px;top:94px;width:1px;height:683px;background:#808080;"></div><div class="a" style="left:23px;top:95px;width:142px;height:1px;background:#404040;"></div><div class="a" style="left:23px;top:95px;width:1px;height:682px;background:#404040;"></div><div class="a" style="left:164px;top:95px;width:1px;height:682px;background:#d4d0c8;"></div><div class="a" style="left:165px;top:94px;width:1px;height:683px;background:#fff;"></div>
<div class="a tree" style="left:24px;top:96px;width:140px;height:680px;overflow:hidden"><svg class="a" style="left:0;top:0" width="140" height="680" shape-rendering="crispEdges"><line x1="8.5" y1="14" x2="8.5" y2="489" stroke="#808080" stroke-width="1" stroke-dasharray="1 1"/><line x1="28.5" y1="16" x2="28.5" y2="293" stroke="#808080" stroke-width="1" stroke-dasharray="1 1"/><line x1="48.5" y1="32" x2="48.5" y2="89" stroke="#808080" stroke-width="1" stroke-dasharray="1 1"/><line x1="48.5" y1="112" x2="48.5" y2="137" stroke="#808080" stroke-width="1" stroke-dasharray="1 1"/><line x1="48.5" y1="160" x2="48.5" y2="201" stroke="#808080" stroke-width="1" stroke-dasharray="1 1"/><line x1="48.5" y1="224" x2="48.5" y2="281" stroke="#808080" stroke-width="1" stroke-dasharray="1 1"/><line x1="48.5" y1="304" x2="48.5" y2="329" stroke="#808080" stroke-width="1" stroke-dasharray="1 1"/><line x1="28.5" y1="368" x2="28.5" y2="377" stroke="#808080" stroke-width="1" stroke-dasharray="1 1"/><line x1="28.5" y1="400" x2="28.5" y2="404" stroke="#808080" stroke-width="1" stroke-dasharray="1 1"/><line x1="28.5" y1="448" x2="28.5" y2="473" stroke="#808080" stroke-width="1" stroke-dasharray="1 1"/><line x1="14" y1="8.5" x2="20" y2="8.5" stroke="#808080" stroke-width="1" stroke-dasharray="1 1"/><rect x="4" y="4" width="9" height="9" fill="#808080"/><rect x="5" y="5" width="7" height="7" fill="#fff"/><rect x="6" y="8" width="5" height="1" fill="#000"/><line x1="34" y1="24.5" x2="44" y2="24.5" stroke="#808080" stroke-width="1" stroke-dasharray="1 1"/><rect x="24" y="20" width="9" height="9" fill="#808080"/><rect x="25" y="21" width="7" height="7" fill="#fff"/><rect x="26" y="24" width="5" height="1" fill="#000"/><line x1="49" y1="40.5" x2="64" y2="40.5" stroke="#808080" stroke-width="1" stroke-dasharray="1 1"/><line x1="49" y1="56.5" x2="64" y2="56.5" stroke="#808080" stroke-width="1" stroke-dasharray="1 1"/><line x1="49" y1="72.5" x2="64" y2="72.5" stroke="#808080" stroke-width="1" stroke-dasharray="1 1"/><line x1="49" y1="88.5" x2="64" y2="88.5" stroke="#808080" stroke-width="1" stroke-dasharray="1 1"/><line x1="34" y1="104.5" x2="44" y2="104.5" stroke="#808080" stroke-width="1" stroke-dasharray="1 1"/><rect x="24" y="100" width="9" height="9" fill="#808080"/><rect x="25" y="101" width="7" height="7" fill="#fff"/><rect x="26" y="104" width="5" height="1" fill="#000"/><line x1="49" y1="120.5" x2="64" y2="120.5" stroke="#808080" stroke-width="1" stroke-dasharray="1 1"/><line x1="49" y1="136.5" x2="64" y2="136.5" stroke="#808080" stroke-width="1" stroke-dasharray="1 1"/><line x1="34" y1="152.5" x2="44" y2="152.5" stroke="#808080" stroke-width="1" stroke-dasharray="1 1"/><rect x="24" y="148" width="9" height="9" fill="#808080"/><rect x="25" y="149" width="7" height="7" fill="#fff"/><rect x="26" y="152" width="5" height="1" fill="#000"/><line x1="49" y1="168.5" x2="64" y2="168.5" stroke="#808080" stroke-width="1" stroke-dasharray="1 1"/><line x1="49" y1="184.5" x2="64" y2="184.5" stroke="#808080" stroke-width="1" stroke-dasharray="1 1"/><line x1="49" y1="200.5" x2="64" y2="200.5" stroke="#808080" stroke-width="1" stroke-dasharray="1 1"/><line x1="34" y1="216.5" x2="44" y2="216.5" stroke="#808080" stroke-width="1" stroke-dasharray="1 1"/><rect x="24" y="212" width="9" height="9" fill="#808080"/><rect x="25" y="213" width="7" height="7" fill="#fff"/><rect x="26" y="216" width="5" height="1" fill="#000"/><line x1="49" y1="232.5" x2="64" y2="232.5" stroke="#808080" stroke-width="1" stroke-dasharray="1 1"/><line x1="49" y1="248.5" x2="64" y2="248.5" stroke="#808080" stroke-width="1" stroke-dasharray="1 1"/><line x1="49" y1="264.5" x2="64" y2="264.5" stroke="#808080" stroke-width="1" stroke-dasharray="1 1"/><line x1="49" y1="280.5" x2="64" y2="280.5" stroke="#808080" stroke-width="1" stroke-dasharray="1 1"/><line x1="34" y1="296.5" x2="44" y2="296.5" stroke="#808080" stroke-width="1" stroke-dasharray="1 1"/><rect x="24" y="292" width="9" height="9" fill="#808080"/><rect x="25" y="293" width="7" height="7" fill="#fff"/><rect x="26" y="296" width="5" height="1" fill="#000"/><line x1="49" y1="312.5" x2="64" y2="312.5" stroke="#808080" stroke-width="1" stroke-dasharray="1 1"/><line x1="49" y1="328.5" x2="64" y2="328.5" stroke="#808080" stroke-width="1" stroke-dasharray="1 1"/><line x1="9" y1="344.5" x2="20" y2="344.5" stroke="#808080" stroke-width="1" stroke-dasharray="1 1"/><line x1="14" y1="360.5" x2="20" y2="360.5" stroke="#808080" stroke-width="1" stroke-dasharray="1 1"/><rect x="4" y="356" width="9" height="9" fill="#808080"/><rect x="5" y="357" width="7" height="7" fill="#fff"/><rect x="6" y="360" width="5" height="1" fill="#000"/><line x1="29" y1="376.5" x2="44" y2="376.5" stroke="#808080" stroke-width="1" stroke-dasharray="1 1"/><line x1="14" y1="392.5" x2="20" y2="392.5" stroke="#808080" stroke-width="1" stroke-dasharray="1 1"/><rect x="4" y="388" width="9" height="9" fill="#808080"/><rect x="5" y="389" width="7" height="7" fill="#fff"/><rect x="6" y="392" width="5" height="1" fill="#000"/><line x1="34" y1="408.5" x2="44" y2="408.5" stroke="#808080" stroke-width="1" stroke-dasharray="1 1"/><rect x="24" y="404" width="9" height="9" fill="#808080"/><rect x="25" y="405" width="7" height="7" fill="#fff"/><rect x="26" y="408" width="5" height="1" fill="#000"/><rect x="28" y="406" width="1" height="5" fill="#000"/><line x1="14" y1="424.5" x2="20" y2="424.5" stroke="#808080" stroke-width="1" stroke-dasharray="1 1"/><rect x="4" y="420" width="9" height="9" fill="#808080"/><rect x="5" y="421" width="7" height="7" fill="#fff"/><rect x="6" y="424" width="5" height="1" fill="#000"/><rect x="8" y="422" width="1" height="5" fill="#000"/><line x1="14" y1="440.5" x2="20" y2="440.5" stroke="#808080" stroke-width="1" stroke-dasharray="1 1"/><rect x="4" y="436" width="9" height="9" fill="#808080"/><rect x="5" y="437" width="7" height="7" fill="#fff"/><rect x="6" y="440" width="5" height="1" fill="#000"/><line x1="29" y1="456.5" x2="44" y2="456.5" stroke="#808080" stroke-width="1" stroke-dasharray="1 1"/><line x1="29" y1="472.5" x2="44" y2="472.5" stroke="#808080" stroke-width="1" stroke-dasharray="1 1"/><line x1="9" y1="488.5" x2="20" y2="488.5" stroke="#808080" stroke-width="1" stroke-dasharray="1 1"/></svg><div class="t" style="left:42px;top:2px;">Views (all)</div><div class="t" style="left:46px;top:18px;">Floor Plans</div><div class="t" style="left:66px;top:34px;">Main house Level 1</div><div class="t" style="left:66px;top:50px;">Main House level 2</div><div class="t" style="left:66px;top:66px;">Ridge</div><div class="t" style="left:66px;top:82px;">Site</div><div class="t" style="left:46px;top:98px;">Ceiling Plans</div><div class="t" style="left:66px;top:114px;">Main house Level 1</div><div class="t" style="left:66px;top:130px;">Main House level 2</div><div class="t" style="left:46px;top:146px;">3D Views</div><div class="t" style="left:66px;top:162px;">3D View 1</div><div class="t" style="left:66px;top:178px;">3D View 2</div><div class="t" style="left:66px;top:194px;">{3D}</div><div class="t" style="left:46px;top:210px;">Elevations (Building Elevation)</div><div class="t" style="left:66px;top:226px;">East</div><div class="t" style="left:66px;top:242px;">North</div><div class="t" style="left:66px;top:258px;">South</div><div class="t" style="left:66px;top:274px;">West</div><div class="t" style="left:46px;top:290px;">Sections (Building Section)</div><div class="t" style="left:66px;top:306px;">Section 1</div><div class="t" style="left:66px;top:322px;">Section 2</div><div class="t" style="left:42px;top:338px;">Legends</div><div class="t" style="left:42px;top:354px;">Schedules/Quantities</div><div class="t" style="left:46px;top:370px;">Window Schedule</div><div class="t" style="left:42px;top:386px;">Sheets (all)</div><div class="a" style="left:43px;top:400px;width:110px;height:16px;background:#d4d0c8;"></div><div class="t" style="left:46px;top:402px;font-weight:bold;font-size:12px;">A101 - Floor Plan</div><div class="t" style="left:42px;top:418px;">Families</div><div class="t" style="left:42px;top:434px;">Groups</div><div class="t" style="left:46px;top:450px;">Detail</div><div class="t" style="left:46px;top:466px;">Model</div><div class="t" style="left:42px;top:482px;">Revit Links</div><svg class="a" style="left:20px;top:3px" width="17" height="11" viewBox="0 0 17 11" shape-rendering="crispEdges" ><path d="M1 5.5 Q4 1 8.5 1 Q13 1 16 5.5 Q13 10 8.5 10 Q4 10 1 5.5 Z" fill="#fff" stroke="#000" stroke-width="1.3" shape-rendering="auto"/><circle cx="8.5" cy="5.5" r="3" fill="#000" shape-rendering="auto"/><rect x="9" y="4" width="2" height="2" fill="#a0a0a0"/></svg><svg class="a" style="left:20px;top:337px" width="16" height="15" viewBox="0 0 16 15" shape-rendering="crispEdges" ><rect x="0.6" y="0.6" width="14.8" height="13.8" fill="#fff" stroke="#000" stroke-width="1.2"/><rect x="3" y="3" width="3" height="3" fill="#000"/><rect x="4" y="4" width="1" height="1" fill="#808080"/><rect x="8" y="3" width="2" height="1" fill="#000"/><rect x="11" y="3" width="3" height="1" fill="#000"/><rect x="8" y="5" width="5" height="1" fill="#000"/><path d="M3 7 V12 L7 9.5 Z" fill="#000"/><rect x="8" y="8" width="2" height="1" fill="#000"/><rect x="11" y="8" width="3" height="1" fill="#000"/><rect x="8" y="10" width="2" height="1" fill="#000"/><rect x="11" y="10" width="2" height="1" fill="#000"/><rect x="8" y="12" width="3" height="1" fill="#000"/></svg><svg class="a" style="left:21px;top:353px" width="15" height="15" viewBox="0 0 15 15" shape-rendering="crispEdges" ><rect x="0" y="0" width="15" height="15" fill="#000"/><rect x="1" y="1" width="13" height="3" fill="#fff"/><rect x="3" y="2" width="9" height="1" fill="#000"/><rect x="1" y="5" width="2" height="2" fill="#fff"/><rect x="4" y="5" width="5" height="2" fill="#fff"/><rect x="10" y="5" width="4" height="2" fill="#fff"/><rect x="1" y="8" width="2" height="2" fill="#fff"/><rect x="4" y="8" width="5" height="2" fill="#fff"/><rect x="10" y="8" width="4" height="2" fill="#fff"/><rect x="1" y="11" width="2" height="2" fill="#fff"/><rect x="4" y="11" width="5" height="2" fill="#fff"/><rect x="10" y="11" width="4" height="2" fill="#fff"/></svg><svg class="a" style="left:21px;top:386px" width="15" height="12" viewBox="0 0 15 12" shape-rendering="crispEdges" ><rect x="0.6" y="0.6" width="13.8" height="10.8" fill="#fff" stroke="#000" stroke-width="1.2"/><rect x="11" y="1" width="1" height="10" fill="#000"/><rect x="12" y="3" width="2" height="1" fill="#000"/><rect x="12" y="6" width="2" height="1" fill="#000"/><rect x="12" y="9" width="2" height="1" fill="#000"/></svg><svg class="a" style="left:22px;top:416px" width="14" height="16" viewBox="0 0 14 16" shape-rendering="crispEdges" ><path d="M1.5 6 Q3 4.5 4.5 6 V13.5 Q3 15 1.5 13.5 Z" fill="#fff" stroke="#000" stroke-width="1.1" shape-rendering="auto"/><path d="M6.5 3.5 L12.5 1 V9.5 L6.5 12 Z M6.5 7.5 L12.5 5 M9.5 2.3 V10.8" fill="#fff" stroke="#000" stroke-width="1.1" shape-rendering="auto"/></svg><svg class="a" style="left:20px;top:432px" width="15" height="15" viewBox="0 0 15 15" shape-rendering="crispEdges" ><rect x="0.75" y="0.75" width="13.5" height="13.5" fill="none" stroke="#000" stroke-width="1.5" stroke-dasharray="2 1"/><rect x="3.5" y="3.5" width="3" height="5" fill="none" stroke="#000" stroke-width="1"/><rect x="3.5" y="10.5" width="3" height="2" fill="none" stroke="#000" stroke-width="1"/><rect x="8.5" y="3.5" width="3" height="9" fill="none" stroke="#000" stroke-width="1"/></svg><svg class="a" style="left:20px;top:483px" width="15" height="9" viewBox="0 0 15 9" shape-rendering="crispEdges" ><rect x="0.6" y="0.6" width="13.8" height="7.8" fill="#fff" stroke="#000" stroke-width="1.2"/></svg></div>
<div class="a" style="left:24px;top:777px;width:141px;height:15px;background:repeating-conic-gradient(#d4d0c8 0 25%,#fff 0 50%) 0 0/2px 2px;"></div>
<div class="a" style="left:24px;top:777px;width:15px;height:15px;background:#d4d0c8;"></div><div class="a" style="left:24px;top:777px;width:15px;height:1px;background:#fff;"></div><div class="a" style="left:24px;top:777px;width:1px;height:15px;background:#fff;"></div><div class="a" style="left:24px;top:791px;width:15px;height:1px;background:#404040;"></div><div class="a" style="left:38px;top:777px;width:1px;height:15px;background:#404040;"></div><div class="a" style="left:25px;top:790px;width:13px;height:1px;background:#808080;"></div><div class="a" style="left:37px;top:778px;width:1px;height:13px;background:#808080;"></div>
<svg class="a" style="left:29px;top:781px" width="5" height="8" viewBox="0 0 5 8" shape-rendering="crispEdges" ><path d="M4 0 V7 L0 3.5 Z" fill="#000" shape-rendering="auto"/></svg>
<div class="a" style="left:149px;top:777px;width:15px;height:15px;background:#d4d0c8;"></div><div class="a" style="left:149px;top:777px;width:15px;height:1px;background:#fff;"></div><div class="a" style="left:149px;top:777px;width:1px;height:15px;background:#fff;"></div><div class="a" style="left:149px;top:791px;width:15px;height:1px;background:#404040;"></div><div class="a" style="left:163px;top:777px;width:1px;height:15px;background:#404040;"></div><div class="a" style="left:150px;top:790px;width:13px;height:1px;background:#808080;"></div><div class="a" style="left:162px;top:778px;width:1px;height:13px;background:#808080;"></div>
<svg class="a" style="left:154px;top:781px" width="5" height="8" viewBox="0 0 5 8" shape-rendering="crispEdges" ><path d="M0 0 V7 L4 3.5 Z" fill="#000" shape-rendering="auto"/></svg>
<div class="a" style="left:40px;top:777px;width:79px;height:15px;background:#d4d0c8;"></div><div class="a" style="left:40px;top:777px;width:79px;height:1px;background:#fff;"></div><div class="a" style="left:40px;top:777px;width:1px;height:15px;background:#fff;"></div><div class="a" style="left:40px;top:791px;width:79px;height:1px;background:#404040;"></div><div class="a" style="left:118px;top:777px;width:1px;height:15px;background:#404040;"></div><div class="a" style="left:41px;top:790px;width:77px;height:1px;background:#808080;"></div><div class="a" style="left:117px;top:778px;width:1px;height:13px;background:#808080;"></div>
<div class="a" style="left:175px;top:75px;width:1066px;height:702px;background:#fff;"></div><div class="a" style="left:175px;top:75px;width:1066px;height:1px;background:#808080;"></div><div class="a" style="left:175px;top:75px;width:1px;height:702px;background:#808080;"></div><div class="a" style="left:176px;top:76px;width:1065px;height:1px;background:#404040;"></div><div class="a" style="left:176px;top:76px;width:1px;height:701px;background:#404040;"></div>
<div class="a" style="left:177px;top:777px;width:1064px;height:17px;background:#d4d0c8;"></div><div class="a" style="left:175px;top:777px;width:1px;height:17px;background:#808080;"></div><div class="a" style="left:176px;top:777px;width:1px;height:17px;background:#404040;"></div>
<div class="a" style="left:234px;top:777px;width:1007px;height:16px;background:repeating-conic-gradient(#d4d0c8 0 25%,#fff 0 50%) 0 0/2px 2px;"></div>
<svg class="a" style="left:178px;top:778px" width="18" height="14" viewBox="0 0 18 14" shape-rendering="crispEdges" ><path d="M0.5 5 Q2 2.5 3.5 4 L6 8.5" fill="none" stroke="#20384c" stroke-width="1.1" shape-rendering="auto"/><path d="M9 4.5 Q9 1 12 1.5 Q14.5 2 15.5 5" fill="none" stroke="#20384c" stroke-width="1.1" shape-rendering="auto"/><path d="M5.5 8 L11 7 L11.5 10 L9 12.5 L6.5 12 Z" fill="#cfeaf8" stroke="#20384c" stroke-width="1" shape-rendering="auto"/><path d="M11 7 L15.5 5 L16.5 7.5 L14 9.5 L11.5 9.5 Z" fill="#cfeaf8" stroke="#20384c" stroke-width="1" shape-rendering="auto"/></svg>
<svg class="a" style="left:202px;top:778px" width="10" height="14" viewBox="0 0 10 14" shape-rendering="crispEdges" ><circle cx="4.5" cy="4.5" r="3.8" fill="#c0dcec" stroke="#6a7a88" stroke-width="1" shape-rendering="auto"/><path d="M2.5 7.5 L3.5 9 V12 H5.5 V9 L6.5 7.5" fill="#fff" stroke="#4a5a68" stroke-width="1" shape-rendering="auto"/><circle cx="3.5" cy="3.5" r="1.2" fill="#eef6fb" shape-rendering="auto"/></svg>
<div class="a" style="left:219px;top:777px;width:16px;height:17px;background:#d4d0c8;"></div><div class="a" style="left:219px;top:777px;width:16px;height:1px;background:#fff;"></div><div class="a" style="left:219px;top:777px;width:1px;height:17px;background:#fff;"></div><div class="a" style="left:219px;top:793px;width:16px;height:1px;background:#404040;"></div><div class="a" style="left:234px;top:777px;width:1px;height:17px;background:#404040;"></div><div class="a" style="left:220px;top:792px;width:14px;height:1px;background:#808080;"></div><div class="a" style="left:233px;top:778px;width:1px;height:15px;background:#808080;"></div>
<svg class="a" style="left:224px;top:782px" width="5" height="8" viewBox="0 0 5 8" shape-rendering="crispEdges" ><path d="M4 0 V7 L0 3.5 Z" fill="#000" shape-rendering="auto"/></svg>
<div class="a" style="left:768px;top:777px;width:17px;height:16px;background:#d4d0c8;"></div><div class="a" style="left:768px;top:777px;width:17px;height:1px;background:#fff;"></div><div class="a" style="left:768px;top:777px;width:1px;height:16px;background:#fff;"></div><div class="a" style="left:768px;top:792px;width:17px;height:1px;background:#404040;"></div><div class="a" style="left:784px;top:777px;width:1px;height:16px;background:#404040;"></div><div class="a" style="left:769px;top:791px;width:15px;height:1px;background:#808080;"></div><div class="a" style="left:783px;top:778px;width:1px;height:14px;background:#808080;"></div>
<div class="a" style="left:0px;top:794px;width:1241px;height:1px;background:#fff;"></div>
<div class="a" style="left:0px;top:796px;width:1241px;height:1px;background:#808080;"></div>
<div class="a" style="left:0px;top:797px;width:1241px;height:10px;background:#d4d0c8;"></div>
<div class="a" style="left:1142px;top:797px;width:24px;height:10px;background:#d4d0c8;"></div><div class="a" style="left:1142px;top:797px;width:24px;height:1px;background:#808080;"></div><div class="a" style="left:1142px;top:797px;width:1px;height:10px;background:#808080;"></div>
<div class="a" style="left:1170px;top:797px;width:26px;height:10px;background:#d4d0c8;"></div><div class="a" style="left:1170px;top:797px;width:26px;height:1px;background:#808080;"></div><div class="a" style="left:1170px;top:797px;width:1px;height:10px;background:#808080;"></div>
<div class="a" style="left:1200px;top:797px;width:29px;height:10px;background:#d4d0c8;"></div><div class="a" style="left:1200px;top:797px;width:29px;height:1px;background:#808080;"></div><div class="a" style="left:1200px;top:797px;width:1px;height:10px;background:#808080;"></div>
<div class="a" style="left:1233px;top:797px;width:8px;height:10px;background:#d4d0c8;"></div><div class="a" style="left:1233px;top:797px;width:8px;height:1px;background:#808080;"></div><div class="a" style="left:1233px;top:797px;width:1px;height:10px;background:#808080;"></div>
<div class="a" style="left:1139px;top:797px;width:1px;height:10px;background:#fff;"></div>
<div class="a" style="left:1167px;top:797px;width:1px;height:10px;background:#fff;"></div>
<div class="a" style="left:1197px;top:797px;width:1px;height:10px;background:#fff;"></div>
<div class="a" style="left:1230px;top:797px;width:1px;height:10px;background:#fff;"></div>
<svg class="a" style="left:1234px;top:798px" width="7" height="9" viewBox="0 0 7 9" shape-rendering="crispEdges" ><path d="M0 0 H7 V9 Z" fill="#8fb8e8" stroke="#1a3d8c" stroke-width="1" shape-rendering="auto"/></svg>
<div class="t" style="left:-1px;top:800px;letter-spacing:-0.13px">B for alternates, CTRL adds, SHIFT unselects.</div>
<svg class="a" style="left:0;top:0" width="1241" height="807" viewBox="0 0 1241 807" shape-rendering="crispEdges"><rect x="373.5" y="276.5" width="475" height="317" fill="none" stroke="#000" stroke-width="1"/><rect x="384.5" y="284.5" width="419" height="300" fill="none" stroke="#000" stroke-width="1"/><rect x="384" y="284" width="5" height="5" fill="#000"/><rect x="799" y="284" width="5" height="5" fill="#000"/><rect x="384" y="579" width="5" height="6" fill="#000"/><rect x="799" y="579" width="5" height="6" fill="#000"/><rect x="388" y="288" width="412" height="2" fill="#000"/><rect x="388" y="288" width="2" height="297" fill="#000"/><rect x="798" y="288" width="2" height="297" fill="#000"/><rect x="416" y="284" width="1" height="5" fill="#000"/><rect x="456" y="284" width="1" height="5" fill="#000"/><rect x="495" y="284" width="1" height="5" fill="#000"/><rect x="534" y="284" width="1" height="5" fill="#000"/><rect x="574" y="284" width="1" height="5" fill="#000"/><rect x="614" y="284" width="1" height="5" fill="#000"/><rect x="653" y="284" width="1" height="5" fill="#000"/><rect x="692" y="284" width="1" height="5" fill="#000"/><rect x="732" y="284" width="1" height="5" fill="#000"/><rect x="772" y="284" width="1" height="5" fill="#000"/><rect x="401" y="285" width="3" height="1" fill="#000"/><rect x="402" y="286" width="1" height="1" fill="#000"/><rect x="435" y="285" width="3" height="1" fill="#000"/><rect x="436" y="286" width="1" height="1" fill="#000"/><rect x="474" y="285" width="3" height="1" fill="#000"/><rect x="475" y="286" width="1" height="1" fill="#000"/><rect x="513" y="285" width="3" height="1" fill="#000"/><rect x="514" y="286" width="1" height="1" fill="#000"/><rect x="553" y="285" width="3" height="1" fill="#000"/><rect x="554" y="286" width="1" height="1" fill="#000"/><rect x="593" y="285" width="3" height="1" fill="#000"/><rect x="594" y="286" width="1" height="1" fill="#000"/><rect x="632" y="285" width="3" height="1" fill="#000"/><rect x="633" y="286" width="1" height="1" fill="#000"/><rect x="671" y="285" width="3" height="1" fill="#000"/><rect x="672" y="286" width="1" height="1" fill="#000"/><rect x="711" y="285" width="3" height="1" fill="#000"/><rect x="712" y="286" width="1" height="1" fill="#000"/><rect x="751" y="285" width="3" height="1" fill="#000"/><rect x="752" y="286" width="1" height="1" fill="#000"/><rect x="784" y="285" width="3" height="1" fill="#000"/><rect x="785" y="286" width="1" height="1" fill="#000"/><rect x="384" y="316" width="5" height="1" fill="#000"/><rect x="384" y="356" width="5" height="1" fill="#000"/><rect x="384" y="395" width="5" height="1" fill="#000"/><rect x="384" y="434" width="5" height="1" fill="#000"/><rect x="384" y="474" width="5" height="1" fill="#000"/><rect x="384" y="514" width="5" height="1" fill="#000"/><rect x="384" y="553" width="5" height="1" fill="#000"/><rect x="800" y="316" width="4" height="1" fill="#000"/><rect x="800" y="356" width="4" height="1" fill="#000"/><rect x="800" y="395" width="4" height="1" fill="#000"/><rect x="800" y="434" width="4" height="1" fill="#000"/><rect x="800" y="474" width="4" height="1" fill="#000"/><rect x="800" y="514" width="4" height="1" fill="#000"/><rect x="800" y="553" width="4" height="1" fill="#000"/><rect x="800" y="288" width="1" height="292" fill="#000"/><rect x="799" y="290" width="1" height="13" fill="#fff"/><rect x="799" y="317" width="1" height="13" fill="#fff"/><rect x="799" y="330" width="1" height="13" fill="#fff"/><rect x="799" y="357" width="1" height="13" fill="#fff"/><rect x="799" y="369" width="1" height="13" fill="#fff"/><rect x="799" y="396" width="1" height="13" fill="#fff"/><rect x="799" y="408" width="1" height="13" fill="#fff"/><rect x="799" y="435" width="1" height="13" fill="#fff"/><rect x="799" y="448" width="1" height="13" fill="#fff"/><rect x="799" y="475" width="1" height="13" fill="#fff"/><rect x="799" y="488" width="1" height="13" fill="#fff"/><rect x="799" y="515" width="1" height="13" fill="#fff"/><rect x="799" y="527" width="1" height="13" fill="#fff"/><rect x="799" y="554" width="1" height="13" fill="#fff"/><rect x="799" y="566" width="1" height="13" fill="#fff"/><rect x="388" y="578" width="416" height="7" fill="#000"/><rect x="389" y="582" width="27" height="2" fill="#fff"/><rect x="402" y="582" width="1" height="1" fill="#000"/><rect x="417" y="582" width="39" height="2" fill="#fff"/><rect x="436" y="582" width="1" height="1" fill="#000"/><rect x="457" y="582" width="38" height="2" fill="#fff"/><rect x="475" y="582" width="1" height="1" fill="#000"/><rect x="496" y="582" width="38" height="2" fill="#fff"/><rect x="514" y="582" width="1" height="1" fill="#000"/><rect x="535" y="582" width="39" height="2" fill="#fff"/><rect x="554" y="582" width="1" height="1" fill="#000"/><rect x="575" y="582" width="39" height="2" fill="#fff"/><rect x="594" y="582" width="1" height="1" fill="#000"/><rect x="615" y="582" width="38" height="2" fill="#fff"/><rect x="633" y="582" width="1" height="1" fill="#000"/><rect x="654" y="582" width="38" height="2" fill="#fff"/><rect x="672" y="582" width="1" height="1" fill="#000"/><rect x="693" y="582" width="39" height="2" fill="#fff"/><rect x="712" y="582" width="1" height="1" fill="#000"/><rect x="733" y="582" width="39" height="2" fill="#fff"/><rect x="752" y="582" width="1" height="1" fill="#000"/><rect x="773" y="582" width="26" height="2" fill="#fff"/><rect x="785" y="582" width="1" height="1" fill="#000"/><rect x="389" y="580" width="14" height="1" fill="#fff"/><rect x="416" y="580" width="14" height="1" fill="#fff"/><rect x="442" y="580" width="14" height="1" fill="#fff"/><rect x="468" y="580" width="14" height="1" fill="#fff"/><rect x="495" y="580" width="14" height="1" fill="#fff"/><rect x="522" y="580" width="14" height="1" fill="#fff"/><rect x="548" y="580" width="14" height="1" fill="#fff"/><rect x="574" y="580" width="14" height="1" fill="#fff"/><rect x="601" y="580" width="14" height="1" fill="#fff"/><rect x="628" y="580" width="14" height="1" fill="#fff"/><rect x="654" y="580" width="14" height="1" fill="#fff"/><rect x="680" y="580" width="14" height="1" fill="#fff"/><rect x="707" y="580" width="14" height="1" fill="#fff"/><rect x="734" y="580" width="14" height="1" fill="#fff"/><rect x="760" y="580" width="14" height="1" fill="#fff"/><rect x="815" y="296" width="1" height="1" fill="#000"/><rect x="815" y="298" width="1" height="1" fill="#000"/><rect x="815" y="300" width="1" height="1" fill="#000"/><rect x="815" y="302" width="1" height="1" fill="#000"/><rect x="815" y="304" width="1" height="1" fill="#000"/><rect x="814" y="306" width="2" height="1" fill="#000"/><rect x="814" y="307" width="1" height="1" fill="#000"/><rect x="817" y="298" width="1" height="1" fill="#000"/><rect x="817" y="300" width="1" height="1" fill="#000"/><rect x="817" y="304" width="1" height="1" fill="#000"/><rect x="820" y="295" width="1" height="1" fill="#000"/><rect x="820" y="297" width="1" height="1" fill="#000"/><rect x="820" y="302" width="1" height="1" fill="#000"/><rect x="820" y="304" width="1" height="1" fill="#000"/><rect x="820" y="299" width="1" height="2" fill="#000"/><rect x="820" y="307" width="2" height="1" fill="#000"/><rect x="826" y="296" width="1" height="2" fill="#000"/><rect x="825" y="298" width="2" height="4" fill="#000"/><rect x="826" y="302" width="1" height="1" fill="#000"/><rect x="825" y="303" width="1" height="4" fill="#000"/><rect x="826" y="305" width="1" height="3" fill="#000"/><rect x="829" y="297" width="1" height="3" fill="#000"/><rect x="828" y="299" width="1" height="3" fill="#000"/><rect x="829" y="301" width="1" height="3" fill="#000"/><rect x="828" y="303" width="1" height="3" fill="#000"/><rect x="829" y="306" width="1" height="1" fill="#000"/><rect x="832" y="292" width="1" height="3" fill="#000"/><rect x="831" y="296" width="2" height="3" fill="#000"/><rect x="832" y="299" width="1" height="2" fill="#000"/><rect x="831" y="300" width="2" height="6" fill="#000"/><rect x="832" y="306" width="1" height="6" fill="#000"/><circle cx="824.5" cy="328.5" r="12.3" fill="none" stroke="#000" stroke-width="2" shape-rendering="auto"/><rect x="818" y="326" width="2" height="7" fill="#000"/><rect x="817" y="326" width="4" height="1" fill="#000"/><rect x="821" y="327" width="1" height="4" fill="#000"/><rect x="826" y="323" width="1" height="1" fill="#000"/><rect x="828" y="323" width="1" height="1" fill="#000"/><rect x="826" y="325" width="1" height="1" fill="#000"/><rect x="828" y="325" width="1" height="1" fill="#000"/><rect x="826" y="327" width="1" height="1" fill="#000"/><rect x="828" y="327" width="1" height="1" fill="#000"/><rect x="826" y="329" width="1" height="1" fill="#000"/><rect x="828" y="329" width="1" height="1" fill="#000"/><rect x="826" y="331" width="1" height="1" fill="#000"/><rect x="828" y="331" width="1" height="1" fill="#000"/><rect x="827" y="333" width="1" height="3" fill="#000"/><rect x="829" y="333" width="1" height="3" fill="#000"/><rect x="810" y="381" width="3" height="12" fill="#000"/><rect x="811" y="382" width="1" height="1" fill="#fff"/><rect x="811" y="384" width="1" height="1" fill="#fff"/><rect x="811" y="386" width="1" height="1" fill="#fff"/><rect x="811" y="388" width="1" height="1" fill="#fff"/><rect x="811" y="390" width="1" height="1" fill="#fff"/><rect x="811" y="393" width="1" height="2" fill="#000"/><text x="0" y="0" transform="translate(828,486) rotate(-90)" font-family="Liberation Sans" font-size="10.5" fill="#000" stroke="#000" stroke-width="0.25" textLength="72" lengthAdjust="spacingAndGlyphs" shape-rendering="auto">Brooks Residence</text><rect x="834" y="427" width="1" height="1" fill="#000"/><rect x="835" y="427" width="1" height="1" fill="#000"/><rect x="834" y="428" width="1" height="1" fill="#000"/><rect x="836" y="428" width="1" height="1" fill="#000"/><rect x="834" y="429" width="1" height="1" fill="#000"/><rect x="836" y="429" width="1" height="1" fill="#000"/><rect x="834" y="430" width="1" height="1" fill="#000"/><rect x="835" y="430" width="1" height="1" fill="#000"/><rect x="836" y="430" width="1" height="1" fill="#000"/><rect x="834" y="431" width="1" height="1" fill="#000"/><rect x="836" y="431" width="1" height="1" fill="#000"/><rect x="834" y="432" width="1" height="1" fill="#000"/><rect x="835" y="433" width="1" height="1" fill="#000"/><rect x="834" y="434" width="1" height="1" fill="#000"/><rect x="836" y="434" width="1" height="1" fill="#000"/><rect x="834" y="435" width="1" height="1" fill="#000"/><rect x="835" y="435" width="1" height="1" fill="#000"/><rect x="836" y="435" width="1" height="1" fill="#000"/><rect x="835" y="436" width="1" height="1" fill="#000"/><rect x="835" y="437" width="1" height="1" fill="#000"/><rect x="834" y="438" width="1" height="1" fill="#000"/><rect x="835" y="438" width="1" height="1" fill="#000"/><rect x="836" y="438" width="1" height="1" fill="#000"/><rect x="835" y="439" width="1" height="1" fill="#000"/><rect x="836" y="439" width="1" height="1" fill="#000"/><rect x="836" y="440" width="1" height="1" fill="#000"/><rect x="836" y="441" width="1" height="1" fill="#000"/><rect x="835" y="443" width="1" height="1" fill="#000"/><rect x="834" y="444" width="1" height="1" fill="#000"/><rect x="835" y="444" width="1" height="1" fill="#000"/><rect x="834" y="445" width="1" height="1" fill="#000"/><rect x="836" y="445" width="1" height="1" fill="#000"/><rect x="835" y="447" width="1" height="1" fill="#000"/><rect x="835" y="450" width="1" height="1" fill="#000"/><rect x="834" y="452" width="1" height="1" fill="#000"/><rect x="835" y="452" width="1" height="1" fill="#000"/><rect x="834" y="453" width="1" height="1" fill="#000"/><rect x="836" y="453" width="1" height="1" fill="#000"/><rect x="834" y="454" width="1" height="1" fill="#000"/><rect x="835" y="454" width="1" height="1" fill="#000"/><rect x="834" y="455" width="1" height="1" fill="#000"/><rect x="835" y="455" width="1" height="1" fill="#000"/><rect x="836" y="455" width="1" height="1" fill="#000"/><rect x="835" y="456" width="1" height="1" fill="#000"/><rect x="836" y="456" width="1" height="1" fill="#000"/><rect x="835" y="458" width="1" height="1" fill="#000"/><rect x="836" y="458" width="1" height="1" fill="#000"/><rect x="834" y="459" width="1" height="1" fill="#000"/><rect x="834" y="460" width="1" height="1" fill="#000"/><rect x="835" y="460" width="1" height="1" fill="#000"/><rect x="836" y="460" width="1" height="1" fill="#000"/><rect x="834" y="461" width="1" height="1" fill="#000"/><rect x="834" y="462" width="1" height="1" fill="#000"/><rect x="835" y="462" width="1" height="1" fill="#000"/><rect x="836" y="462" width="1" height="1" fill="#000"/><rect x="834" y="463" width="1" height="1" fill="#000"/><rect x="835" y="465" width="1" height="1" fill="#000"/><rect x="834" y="467" width="1" height="1" fill="#000"/><rect x="835" y="467" width="1" height="1" fill="#000"/><rect x="836" y="467" width="1" height="1" fill="#000"/><rect x="835" y="468" width="1" height="1" fill="#000"/><rect x="836" y="468" width="1" height="1" fill="#000"/><rect x="834" y="469" width="1" height="1" fill="#000"/><rect x="835" y="469" width="1" height="1" fill="#000"/><rect x="836" y="469" width="1" height="1" fill="#000"/><rect x="834" y="470" width="1" height="1" fill="#000"/><rect x="835" y="470" width="1" height="1" fill="#000"/><rect x="836" y="470" width="1" height="1" fill="#000"/><rect x="834" y="471" width="1" height="1" fill="#000"/><rect x="835" y="471" width="1" height="1" fill="#000"/><rect x="836" y="471" width="1" height="1" fill="#000"/><rect x="836" y="472" width="1" height="1" fill="#000"/><rect x="838" y="431" width="1" height="1" fill="#000"/><rect x="839" y="431" width="1" height="1" fill="#000"/><rect x="840" y="431" width="1" height="1" fill="#000"/><rect x="838" y="432" width="1" height="1" fill="#000"/><rect x="840" y="433" width="1" height="1" fill="#000"/><rect x="838" y="434" width="1" height="1" fill="#000"/><rect x="839" y="434" width="1" height="1" fill="#000"/><rect x="840" y="434" width="1" height="1" fill="#000"/><rect x="839" y="435" width="1" height="1" fill="#000"/><rect x="840" y="435" width="1" height="1" fill="#000"/><rect x="840" y="436" width="1" height="1" fill="#000"/><rect x="839" y="437" width="1" height="1" fill="#000"/><rect x="838" y="439" width="1" height="1" fill="#000"/><rect x="839" y="439" width="1" height="1" fill="#000"/><rect x="840" y="439" width="1" height="1" fill="#000"/><rect x="838" y="441" width="1" height="1" fill="#000"/><rect x="839" y="441" width="1" height="1" fill="#000"/><rect x="840" y="443" width="1" height="1" fill="#000"/><rect x="839" y="444" width="1" height="1" fill="#000"/><rect x="840" y="444" width="1" height="1" fill="#000"/><rect x="838" y="445" width="1" height="1" fill="#000"/><rect x="839" y="445" width="1" height="1" fill="#000"/><rect x="840" y="445" width="1" height="1" fill="#000"/><rect x="840" y="446" width="1" height="1" fill="#000"/><rect x="838" y="448" width="1" height="1" fill="#000"/><rect x="839" y="448" width="1" height="1" fill="#000"/><rect x="840" y="448" width="1" height="1" fill="#000"/><rect x="838" y="449" width="1" height="1" fill="#000"/><rect x="839" y="449" width="1" height="1" fill="#000"/><rect x="840" y="451" width="1" height="1" fill="#000"/><rect x="840" y="453" width="1" height="1" fill="#000"/><rect x="839" y="454" width="1" height="1" fill="#000"/><rect x="839" y="455" width="1" height="1" fill="#000"/><rect x="840" y="455" width="1" height="1" fill="#000"/><rect x="840" y="456" width="1" height="1" fill="#000"/><rect x="838" y="457" width="1" height="1" fill="#000"/><rect x="839" y="457" width="1" height="1" fill="#000"/><rect x="839" y="458" width="1" height="1" fill="#000"/><rect x="840" y="459" width="1" height="1" fill="#000"/><rect x="839" y="460" width="1" height="1" fill="#000"/><rect x="840" y="460" width="1" height="1" fill="#000"/><rect x="839" y="462" width="1" height="1" fill="#000"/><rect x="839" y="463" width="1" height="1" fill="#000"/><rect x="840" y="463" width="1" height="1" fill="#000"/><rect x="838" y="464" width="1" height="1" fill="#000"/><rect x="839" y="464" width="1" height="1" fill="#000"/><rect x="838" y="465" width="1" height="1" fill="#000"/><rect x="839" y="465" width="1" height="1" fill="#000"/><rect x="840" y="465" width="1" height="1" fill="#000"/><rect x="839" y="466" width="1" height="1" fill="#000"/><rect x="840" y="467" width="1" height="1" fill="#000"/><rect x="839" y="469" width="1" height="1" fill="#000"/><rect x="840" y="469" width="1" height="1" fill="#000"/><rect x="838" y="470" width="1" height="1" fill="#000"/><rect x="839" y="470" width="1" height="1" fill="#000"/><rect x="838" y="471" width="1" height="1" fill="#000"/><rect x="839" y="472" width="1" height="1" fill="#000"/><rect x="809" y="559" width="2" height="3" fill="#000"/><rect x="811" y="560" width="3" height="2" fill="#000"/><rect x="814" y="559" width="2" height="3" fill="#000"/><rect x="817" y="559" width="2" height="3" fill="#000"/><rect x="820" y="560" width="2" height="2" fill="#000"/><rect x="822" y="559" width="2" height="3" fill="#000"/><rect x="824" y="560" width="2" height="1" fill="#000"/><rect x="809" y="566" width="1" height="1" fill="#000"/><rect x="811" y="565" width="2" height="3" fill="#000"/><rect x="813" y="565" width="1" height="1" fill="#000"/><rect x="819" y="566" width="1" height="1" fill="#000"/><rect x="821" y="565" width="2" height="3" fill="#000"/><rect x="823" y="565" width="3" height="2" fill="#000"/><path d="M807 581.5 L809.5 575 L812 581.5 M808 579.5 H811" fill="none" stroke="#000" stroke-width="1.1" shape-rendering="auto"/><rect x="816" y="575" width="1" height="7" fill="#000"/><rect x="815" y="576" width="1" height="1" fill="#000"/><rect x="819.5" y="575.5" width="4" height="6" fill="none" stroke="#000" stroke-width="1"/><rect x="826" y="575" width="1" height="7" fill="#000"/><rect x="825" y="576" width="1" height="1" fill="#000"/><rect x="832" y="568" width="1" height="17" fill="#000"/><rect x="834" y="567" width="6" height="18" fill="#000"/><rect x="836" y="565" width="3" height="2" fill="#000"/><rect x="833" y="574" width="1" height="5" fill="#fff"/><rect x="836" y="572" width="2" height="2" fill="#fff"/><rect x="835" y="582" width="1" height="1" fill="#fff"/><rect x="838" y="582" width="1" height="1" fill="#fff"/><line x1="423" y1="347.5" x2="901" y2="347.5" stroke="#000" stroke-width="1" stroke-dasharray="11 2 2 2 2 3" stroke-dashoffset="13"/><line x1="423" y1="512.5" x2="751" y2="512.5" stroke="#000" stroke-width="1" stroke-dasharray="11 3 2 2 2 2" stroke-dashoffset="7"/><line x1="422.5" y1="349" x2="422.5" y2="686" stroke="#000" stroke-width="1" stroke-dasharray="11 2 2 3 2 2" stroke-dashoffset="0"/><line x1="751.5" y1="347" x2="751.5" y2="686" stroke="#000" stroke-width="1" stroke-dasharray="11 2 2 2 2 3" stroke-dashoffset="1"/><rect x="320.5" y="167.5" width="581" height="560" fill="none" stroke="#ff0000" stroke-width="1"/><rect x="321" y="731" width="554" height="1" fill="#ff0000"/><circle cx="321.5" cy="731.5" r="4.6" fill="#0000ff" shape-rendering="auto"/><circle cx="874.5" cy="731.5" r="4.6" fill="#0000ff" shape-rendering="auto"/><rect x="322" y="731" width="553" height="1" fill="#ff0000"/><rect x="326" y="728" width="2" height="3" fill="#0000ff"/><rect x="329" y="728" width="3" height="1" fill="#0000ff"/><rect x="330" y="729" width="1" height="2" fill="#0000ff"/><rect x="333" y="728" width="2" height="3" fill="#0000ff"/><rect x="336" y="728" width="2" height="3" fill="#0000ff"/><rect x="339" y="728" width="3" height="1" fill="#0000ff"/><rect x="340" y="729" width="1" height="2" fill="#0000ff"/><rect x="598.5" y="168.5" width="7" height="8" fill="#fff" stroke="#000" stroke-width="1"/><rect x="601" y="171" width="1" height="1" fill="#000"/><path d="M598.5 176.5 L602 180 L605.5 176.5" fill="none" stroke="#000" stroke-width="1.2" shape-rendering="auto"/><rect x="602" y="177" width="1" height="1" fill="#000"/><rect x="579.5" y="715.5" width="7" height="7" fill="#fff" stroke="#000" stroke-width="1"/><rect x="582" y="718" width="1" height="1" fill="#000"/><path d="M579.5 715.5 L583 712 L586.5 715.5" fill="none" stroke="#000" stroke-width="1.2" shape-rendering="auto"/><rect x="583" y="714" width="1" height="1" fill="#000"/><rect x="325.5" y="388.5" width="7" height="6" fill="#fff" stroke="#000" stroke-width="1"/><rect x="328" y="391" width="1" height="1" fill="#000"/><path d="M332.5 388.5 L336 391.5 L332.5 394.5" fill="none" stroke="#000" stroke-width="1.2" shape-rendering="auto"/><rect x="333" y="391" width="1" height="1" fill="#000"/><rect x="877.5" y="388.5" width="7" height="6" fill="#fff" stroke="#000" stroke-width="1"/><rect x="880" y="391" width="1" height="1" fill="#000"/><path d="M877.5 388.5 L874 391.5 L877.5 394.5" fill="none" stroke="#000" stroke-width="1.2" shape-rendering="auto"/><rect x="876" y="391" width="1" height="1" fill="#000"/><rect x="557" y="379" width="44" height="118" fill="#ffe196"/><rect x="600" y="387" width="71" height="110" fill="#ffe196"/><rect x="628" y="380" width="43" height="7" fill="#ffe196"/><rect x="600.5" y="376.5" width="28" height="10" fill="#fff" stroke="#000" stroke-width="1"/><rect x="600" y="386" width="29" height="3" fill="#000"/><rect x="557" y="379" width="44" height="3" fill="#000"/><rect x="557" y="379" width="3" height="56" fill="#000"/><rect x="598" y="379" width="3" height="118" fill="#000"/><rect x="628" y="380" width="43" height="3" fill="#000"/><rect x="669" y="380" width="3" height="117" fill="#000"/><rect x="492" y="494" width="180" height="3" fill="#000"/><rect x="492" y="432" width="109" height="3" fill="#000"/><rect x="492" y="432" width="3" height="65" fill="#000"/><rect x="494" y="437" width="3" height="56" fill="#000"/><rect x="506" y="434" width="2" height="28" fill="#000"/><rect x="506" y="460" width="52" height="2" fill="#000"/><rect x="557" y="435" width="1" height="59" fill="#000"/><rect x="558" y="435" width="2" height="59" fill="#ffe196"/><rect x="560" y="435" width="1" height="59" fill="#000"/><line x1="519.5" y1="435" x2="519.5" y2="493" stroke="#000" stroke-width="1" stroke-dasharray="11 2 2 2 2 3" stroke-dashoffset="5"/><line x1="539.5" y1="435" x2="539.5" y2="493" stroke="#000" stroke-width="1" stroke-dasharray="11 2 2 2 2 3" stroke-dashoffset="5"/><line x1="560" y1="397.5" x2="598" y2="397.5" stroke="#000" stroke-width="1" stroke-dasharray="11 2 2 2 2 3" stroke-dashoffset="3"/><line x1="560" y1="416.5" x2="598" y2="416.5" stroke="#000" stroke-width="1" stroke-dasharray="11 2 2 2 2 3" stroke-dashoffset="3"/><rect x="564.5" y="439.5" width="9" height="14" fill="none" stroke="#000" stroke-width="1"/><rect x="583.5" y="439.5" width="10" height="14" fill="none" stroke="#000" stroke-width="1"/><line x1="579.5" y1="435" x2="579.5" y2="493" stroke="#000" stroke-width="1" stroke-dasharray="11 2 2 2 2 3" stroke-dashoffset="2"/><rect x="600.5" y="418.5" width="17" height="6" fill="none" stroke="#000" stroke-width="1"/><rect x="600" y="424" width="18" height="4" fill="#000"/><rect x="617" y="418" width="2" height="79" fill="#000"/><rect x="600.5" y="446.5" width="17" height="7" fill="none" stroke="#000" stroke-width="1"/><path d="M601 447 L617 453 M601 453 L617 447" stroke="#000" stroke-width="1"/><rect x="600.5" y="470.5" width="17" height="8" fill="none" stroke="#000" stroke-width="1"/><path d="M601 471 L617 478 M601 478 L617 471" stroke="#000" stroke-width="1"/><path d="M604 441 Q600 435 605 429 L610 429 L611 436 L607 437 Q609 441 604 441 Z" fill="none" stroke="#000" stroke-width="1"/><rect x="603.5" y="432.5" width="8" height="4" fill="none" stroke="#000" stroke-width="1"/><path d="M602 493 L602 488 Q604 485 607 488" fill="none" stroke="#000" stroke-width="1"/><rect x="607.5" y="488.5" width="8" height="5" fill="none" stroke="#000" stroke-width="1"/><rect x="604" y="389" width="2" height="11" fill="#000"/><path d="M605 399 Q611 397 612 389" fill="none" stroke="#000" stroke-width="1"/><rect x="628" y="382" width="3" height="24" fill="#000"/><path d="M630 405 Q622 406 620 414 L630 414" fill="none" stroke="#000" stroke-width="1"/><rect x="620" y="413" width="51" height="1" fill="#000"/><rect x="630" y="414" width="41" height="1" fill="#000"/><rect x="629" y="418" width="42" height="1" fill="#000"/><rect x="629" y="423" width="42" height="1" fill="#000"/><rect x="629" y="414" width="42" height="5" fill="#ffe196"/><rect x="629" y="419" width="42" height="4" fill="#ffe196"/><rect x="630" y="416" width="26" height="1" fill="#000"/><rect x="660" y="417" width="11" height="1" fill="#000"/><rect x="629.5" y="414.5" width="4" height="9" fill="none" stroke="#000" stroke-width="1"/><rect x="624" y="420" width="6" height="1" fill="#000"/><path d="M628 415 Q623 417 623 423" fill="none" stroke="#000" stroke-width="1"/><rect x="628" y="424" width="3" height="24" fill="#000"/><path d="M630 447 Q637 448 638 455" fill="none" stroke="#000" stroke-width="1"/><rect x="628" y="455" width="43" height="3" fill="#000"/><line x1="649.5" y1="383" x2="649.5" y2="413" stroke="#000" stroke-width="1" stroke-dasharray="11 2 2 2 2 3" stroke-dashoffset="4"/><line x1="649.5" y1="424" x2="649.5" y2="456" stroke="#000" stroke-width="1" stroke-dasharray="11 2 2 2 2 3" stroke-dashoffset="4"/><line x1="649.5" y1="458" x2="649.5" y2="494" stroke="#000" stroke-width="1" stroke-dasharray="11 2 2 2 2 3" stroke-dashoffset="4"/><line x1="628.5" y1="458" x2="628.5" y2="494" stroke="#000" stroke-width="1" stroke-dasharray="11 2 2 2 2 3" stroke-dashoffset="4"/><path d="M618 455 L627 460 L633 463 L633 470" fill="none" stroke="#000" stroke-width="1.5"/><rect x="618" y="466" width="16" height="1" fill="#000"/><rect x="629" y="455" width="2" height="15" fill="#000"/><path d="M508.5 494 Q508.5 486.5 516.5 486.5 L516.5 494" fill="none" stroke="#000" stroke-width="1.2" shape-rendering="auto"/><path d="M557 478.5 Q549.5 478.5 549.5 486.5 L557 486.5" fill="none" stroke="#000" stroke-width="1.2" shape-rendering="auto"/><path d="M520 435 L520 442 Q526 440 528 435 M528 435 Q530 440 536 442 L536 435" fill="none" stroke="#000" stroke-width="1"/><rect x="518" y="435" width="2" height="2" fill="#000"/><path d="M557 399 L550 399 L557 407 L550 414 L557 414 M550 399 L550 401 M550 414 L550 412" fill="none" stroke="#000" stroke-width="1"/><rect x="550" y="398" width="8" height="1" fill="#000"/><rect x="550" y="414" width="8" height="1" fill="#000"/><rect x="560" y="488" width="14" height="1" fill="#000"/><rect x="573" y="488" width="1" height="6" fill="#000"/><rect x="560" y="486" width="2" height="1" fill="#000"/><rect x="611" y="364" width="1" height="142" fill="#000"/><rect x="606" y="505" width="6" height="2" fill="#000"/><rect x="476" y="465" width="221" height="1" fill="#000"/><rect x="696" y="460" width="2" height="6" fill="#000"/><path d="M606 361.5 L610 357.5 L614 361.5 L610 365.5 Z" fill="#0000ff"/><rect x="611" y="361" width="4" height="1" fill="#0000ff"/><rect x="610" y="360" width="2" height="3" fill="#fff"/><rect x="612" y="359" width="1" height="1" fill="#fff"/><rect x="605" y="361" width="5" height="2" fill="#0000ff"/><path d="M469 463 L473 459 L477 463" fill="none" stroke="#0000ff" stroke-width="1.5"/><rect x="469" y="465" width="3" height="1" fill="#0000ff"/><rect x="474" y="465" width="3" height="1" fill="#0000ff"/><rect x="471" y="466" width="4" height="1" fill="#0000ff"/><rect x="472" y="463" width="1" height="1" fill="#0000ff"/></svg>
</body></html>
